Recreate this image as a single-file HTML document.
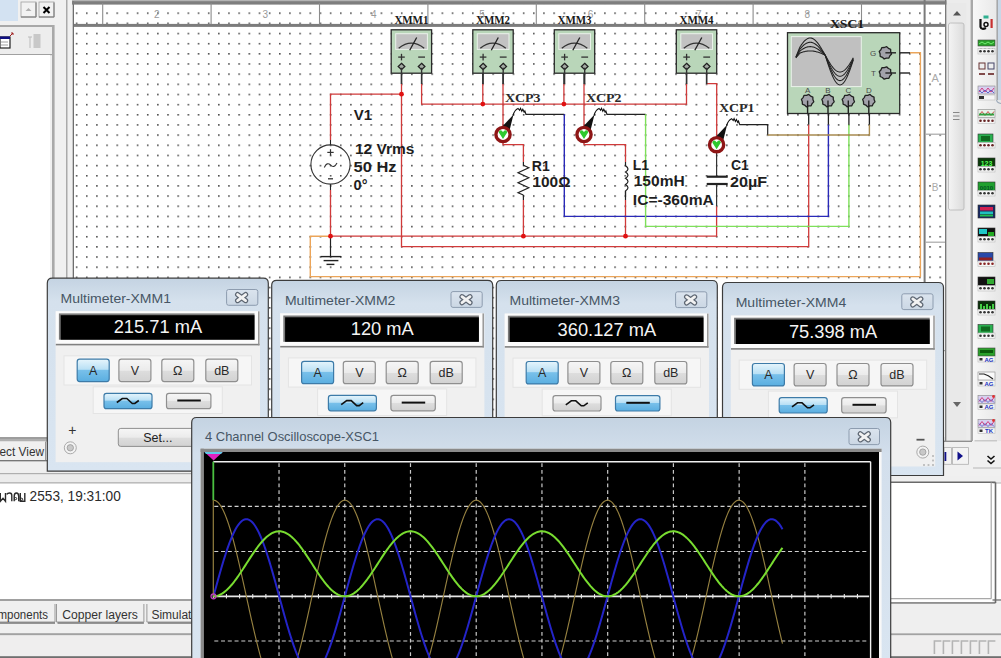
<!DOCTYPE html>
<html><head><meta charset="utf-8"><style>
html,body{margin:0;padding:0;background:#f0f0f0;overflow:hidden;width:1001px;height:658px}
svg{display:block}
</style></head><body><svg width="1001" height="658" viewBox="0 0 1001 658"><defs>
<pattern id="dots" patternUnits="userSpaceOnUse" x="75.8" y="12.4" width="10.16" height="10.16">
<rect x="0.1" y="0.1" width="1.4" height="1.4" fill="#1e1e1e"/></pattern>
<linearGradient id="frame" x1="0" y1="0" x2="0" y2="1"><stop offset="0" stop-color="#c4d3e2"/><stop offset="0.12" stop-color="#d5e1ed"/><stop offset="1" stop-color="#d9e5f1"/></linearGradient>
<linearGradient id="frameS" x1="0" y1="0" x2="0" y2="1"><stop offset="0" stop-color="#c4d3e2"/><stop offset="0.15" stop-color="#d3dfec"/><stop offset="1" stop-color="#d9e5f1"/></linearGradient>
<linearGradient id="btnBlue" x1="0" y1="0" x2="0" y2="1"><stop offset="0" stop-color="#e6f5fc"/><stop offset="0.45" stop-color="#b9e0f5"/><stop offset="0.5" stop-color="#78c0ea"/><stop offset="1" stop-color="#5aaee0"/></linearGradient>
<linearGradient id="btnGray" x1="0" y1="0" x2="0" y2="1"><stop offset="0" stop-color="#f6f6f6"/><stop offset="0.5" stop-color="#ebebeb"/><stop offset="0.52" stop-color="#dddddd"/><stop offset="1" stop-color="#d2d2d2"/></linearGradient>
<linearGradient id="closeG" x1="0" y1="0" x2="0" y2="1"><stop offset="0" stop-color="#dbe4ee"/><stop offset="1" stop-color="#cbd7e4"/></linearGradient>
<linearGradient id="thumb" x1="0" y1="0" x2="1" y2="0"><stop offset="0" stop-color="#f4f4f4"/><stop offset="1" stop-color="#dcdcdc"/></linearGradient>
<linearGradient id="tbar" x1="0" y1="0" x2="1" y2="0"><stop offset="0" stop-color="#f7f7f7"/><stop offset="1" stop-color="#e6e6e6"/></linearGradient>
<clipPath id="canvasClip"><rect x="74" y="3" width="871" height="434"/></clipPath>
</defs>
<rect x="0.00" y="0.00" width="1001.00" height="658.00" fill="#f0f0f0" />
<rect x="0.00" y="0.00" width="18.00" height="21.00" fill="#d3e2f2" />
<rect x="21.00" y="2.00" width="15.00" height="15.00" fill="#f2f2f2" stroke="#a0a0a0" stroke-width="0.8"/>
<line x1="36.00" y1="2.50" x2="36.00" y2="17.00" stroke="#808080" stroke-width="1.2" />
<line x1="21.00" y1="17.00" x2="36.00" y2="17.00" stroke="#808080" stroke-width="1.2" />
<rect x="39.00" y="2.00" width="15.00" height="15.00" fill="#f2f2f2" stroke="#a0a0a0" stroke-width="0.8"/>
<line x1="54.00" y1="2.50" x2="54.00" y2="17.00" stroke="#808080" stroke-width="1.2" />
<line x1="39.00" y1="17.00" x2="54.00" y2="17.00" stroke="#808080" stroke-width="1.2" />
<path d="M25.5,11 L28.5,8 L31.5,11 Z" fill="#b0b0b0"/>
<path d="M43.5,7 L49.5,13 M49.5,7 L43.5,13" stroke="#000" stroke-width="2"/>
<rect x="0.00" y="25.00" width="54.00" height="2.00" fill="#a8a8a8" />
<rect x="0.00" y="27.00" width="52.00" height="27.00" fill="#ededed" />
<rect x="52.00" y="25.00" width="2.60" height="412.00" fill="#a9a9a9" />
<rect x="0.00" y="37.00" width="10.00" height="11.00" fill="#fff" stroke="#202020" stroke-width="1.2"/>
<rect x="0.00" y="36.50" width="10.00" height="2.50" fill="#101080" />
<line x1="1.00" y1="42.00" x2="8.00" y2="42.00" stroke="#888" stroke-width="0.8" />
<line x1="1.00" y1="45.00" x2="8.00" y2="45.00" stroke="#888" stroke-width="0.8" />
<path d="M10,36 L13,33 M11,33 L13,33 L13,35" stroke="#a02020" stroke-width="1" fill="none"/>
<rect x="33.50" y="34.00" width="7.00" height="14.00" fill="#c8c8c8" />
<line x1="30.00" y1="37.00" x2="30.00" y2="48.00" stroke="#bbb" stroke-width="1" />
<line x1="28.00" y1="37.00" x2="32.00" y2="37.00" stroke="#bbb" stroke-width="1" />
<rect x="0.00" y="54.00" width="52.00" height="1.20" fill="#a0a0a0" />
<rect x="0.00" y="55.00" width="50.00" height="382.00" fill="#ffffff" />
<rect x="66.20" y="0.00" width="1.20" height="437.00" fill="#9a9a9a" />
<rect x="72.70" y="0.00" width="1.30" height="437.00" fill="#6e6e6e" />
<rect x="74.00" y="0.00" width="872.00" height="437.00" fill="#ffffff" />
<rect x="74.00" y="3.00" width="851.00" height="434.00" fill="url(#dots)" />
<rect x="925.50" y="3.00" width="19.50" height="434.00" fill="url(#dots)" />
<rect x="72.00" y="0.00" width="895.00" height="1.10" fill="#b4b4b4" />
<rect x="72.00" y="1.10" width="895.00" height="3.50" fill="#7e7e7e" />
<rect x="74.00" y="23.90" width="872.00" height="3.00" fill="#7c7c7c" />
<line x1="102.70" y1="3.00" x2="102.70" y2="24.30" stroke="#8c8c8c" stroke-width="1.1" />
<line x1="211.10" y1="3.00" x2="211.10" y2="24.30" stroke="#8c8c8c" stroke-width="1.1" />
<line x1="319.50" y1="3.00" x2="319.50" y2="24.30" stroke="#8c8c8c" stroke-width="1.1" />
<line x1="427.90" y1="3.00" x2="427.90" y2="24.30" stroke="#8c8c8c" stroke-width="1.1" />
<line x1="536.30" y1="3.00" x2="536.30" y2="24.30" stroke="#8c8c8c" stroke-width="1.1" />
<line x1="644.70" y1="3.00" x2="644.70" y2="24.30" stroke="#8c8c8c" stroke-width="1.1" />
<line x1="753.10" y1="3.00" x2="753.10" y2="24.30" stroke="#8c8c8c" stroke-width="1.1" />
<line x1="861.50" y1="3.00" x2="861.50" y2="24.30" stroke="#8c8c8c" stroke-width="1.1" />
<text x="156.90" y="17.80" font-size="10" fill="#9a9a9a" font-family="Liberation Sans" text-anchor="middle">2</text>
<text x="265.30" y="17.80" font-size="10" fill="#9a9a9a" font-family="Liberation Sans" text-anchor="middle">3</text>
<text x="373.70" y="17.80" font-size="10" fill="#9a9a9a" font-family="Liberation Sans" text-anchor="middle">4</text>
<text x="482.10" y="17.80" font-size="10" fill="#9a9a9a" font-family="Liberation Sans" text-anchor="middle">5</text>
<text x="590.50" y="17.80" font-size="10" fill="#9a9a9a" font-family="Liberation Sans" text-anchor="middle">6</text>
<text x="698.90" y="17.80" font-size="10" fill="#9a9a9a" font-family="Liberation Sans" text-anchor="middle">7</text>
<text x="807.30" y="17.80" font-size="10" fill="#9a9a9a" font-family="Liberation Sans" text-anchor="middle">8</text>
<rect x="923.60" y="0.00" width="2.00" height="437.00" fill="#7a7a7a" />
<rect x="945.00" y="0.00" width="1.60" height="441.00" fill="#7a7a7a" />
<line x1="925.50" y1="134.20" x2="945.00" y2="134.20" stroke="#a8a8a8" stroke-width="1.2" />
<line x1="925.50" y1="242.20" x2="945.00" y2="242.20" stroke="#a8a8a8" stroke-width="1.2" />
<line x1="925.50" y1="350.60" x2="945.00" y2="350.60" stroke="#a8a8a8" stroke-width="1.2" />
<text x="935.20" y="82.00" font-size="11" fill="#aaa" font-family="Liberation Sans" text-anchor="middle">A</text>
<text x="935.20" y="190.50" font-size="10" fill="#aaa" font-family="Liberation Sans" text-anchor="middle">B</text>
<polyline points="330.50,140.00 330.50,94.20 401.50,94.20" fill="none" stroke="#d03a3a" stroke-width="1.3" stroke-linejoin="miter" />
<line x1="330.50" y1="140.00" x2="330.50" y2="145.00" stroke="#222" stroke-width="1.1" />
<polyline points="401.50,84.00 401.50,246.60 808.70,246.60 808.70,124.60" fill="none" stroke="#d03a3a" stroke-width="1.3" stroke-linejoin="miter" />
<line x1="401.50" y1="66.60" x2="401.50" y2="84.00" stroke="#222" stroke-width="1.3" />
<line x1="808.70" y1="100.60" x2="808.70" y2="124.60" stroke="#222" stroke-width="1.3" />
<polyline points="421.60,84.00 421.60,104.10 686.50,104.10 686.50,84.00" fill="none" stroke="#d03a3a" stroke-width="1.3" stroke-linejoin="miter" />
<line x1="421.60" y1="66.60" x2="421.60" y2="84.00" stroke="#222" stroke-width="1.3" />
<line x1="686.50" y1="66.60" x2="686.50" y2="84.00" stroke="#222" stroke-width="1.3" />
<polyline points="482.80,84.00 482.80,104.10" fill="none" stroke="#d03a3a" stroke-width="1.3" stroke-linejoin="miter" />
<line x1="482.80" y1="66.60" x2="482.80" y2="84.00" stroke="#222" stroke-width="1.3" />
<polyline points="563.90,84.00 563.90,104.10" fill="none" stroke="#d03a3a" stroke-width="1.3" stroke-linejoin="miter" />
<line x1="563.90" y1="66.60" x2="563.90" y2="84.00" stroke="#222" stroke-width="1.3" />
<polyline points="503.00,84.00 503.00,144.60 523.40,144.60 523.40,162.00" fill="none" stroke="#d03a3a" stroke-width="1.3" stroke-linejoin="miter" />
<line x1="503.00" y1="66.60" x2="503.00" y2="84.00" stroke="#222" stroke-width="1.3" />
<polyline points="584.00,84.00 584.00,144.70 625.50,144.70 625.50,162.00" fill="none" stroke="#d03a3a" stroke-width="1.3" stroke-linejoin="miter" />
<line x1="584.00" y1="66.60" x2="584.00" y2="84.00" stroke="#222" stroke-width="1.3" />
<line x1="706.50" y1="66.60" x2="706.50" y2="83.60" stroke="#222" stroke-width="1.3" />
<polyline points="706.50,83.60 716.70,83.60 716.70,144.70" fill="none" stroke="#d03a3a" stroke-width="1.3" stroke-linejoin="miter" />
<line x1="716.60" y1="152.00" x2="716.60" y2="176.70" stroke="#333" stroke-width="1.2" />
<line x1="716.60" y1="184.00" x2="716.60" y2="206.50" stroke="#333" stroke-width="1.2" />
<polyline points="716.60,206.50 716.60,236.20 330.50,236.20" fill="none" stroke="#d03a3a" stroke-width="1.3" stroke-linejoin="miter" />
<line x1="523.40" y1="195.00" x2="523.40" y2="200.00" stroke="#222" stroke-width="1.2" />
<polyline points="523.40,200.00 523.40,236.20" fill="none" stroke="#d03a3a" stroke-width="1.3" stroke-linejoin="miter" />
<line x1="625.50" y1="191.00" x2="625.50" y2="200.00" stroke="#222" stroke-width="1.2" />
<polyline points="625.50,200.00 625.50,236.20" fill="none" stroke="#d03a3a" stroke-width="1.3" stroke-linejoin="miter" />
<line x1="330.50" y1="184.00" x2="330.50" y2="190.00" stroke="#222" stroke-width="1.1" />
<polyline points="330.50,190.00 330.50,236.20" fill="none" stroke="#d03a3a" stroke-width="1.3" stroke-linejoin="miter" />
<line x1="330.50" y1="236.20" x2="330.50" y2="256.60" stroke="#222" stroke-width="1.2" />
<line x1="320.60" y1="256.60" x2="341.30" y2="256.60" stroke="#222" stroke-width="1.4" />
<line x1="323.60" y1="260.60" x2="338.40" y2="260.60" stroke="#222" stroke-width="1.4" />
<line x1="326.50" y1="264.40" x2="334.40" y2="264.40" stroke="#222" stroke-width="1.4" />
<polyline points="330.50,236.20 310.30,236.20 310.30,276.60 920.40,276.60 920.40,52.80 910.00,52.80" fill="none" stroke="#eba55a" stroke-width="1.4" stroke-linejoin="miter" />
<line x1="885.40" y1="52.80" x2="910.00" y2="52.80" stroke="#222" stroke-width="1.4" />
<line x1="885.40" y1="73.00" x2="910.00" y2="73.00" stroke="#222" stroke-width="1.4" />
<line x1="525.50" y1="114.30" x2="564.30" y2="114.30" stroke="#222" stroke-width="1.2" />
<polyline points="564.30,114.30 564.30,216.40 828.40,216.40 828.40,124.60" fill="none" stroke="#2a2ab8" stroke-width="1.4" stroke-linejoin="miter" />
<line x1="828.40" y1="100.60" x2="828.40" y2="124.60" stroke="#222" stroke-width="1.3" />
<line x1="606.50" y1="114.30" x2="645.60" y2="114.30" stroke="#222" stroke-width="1.2" />
<polyline points="645.60,114.30 645.60,226.40 848.90,226.40 848.90,124.60" fill="none" stroke="#7ee05a" stroke-width="1.4" stroke-linejoin="miter" />
<line x1="848.90" y1="100.60" x2="848.90" y2="124.60" stroke="#222" stroke-width="1.3" />
<polyline points="739.30,124.60 767.70,124.60 767.70,135.00" fill="none" stroke="#222" stroke-width="1.2" stroke-linejoin="miter" />
<polyline points="767.70,135.00 869.40,135.00 869.40,124.60" fill="none" stroke="#a88a50" stroke-width="1.4" stroke-linejoin="miter" />
<line x1="869.40" y1="100.60" x2="869.40" y2="124.60" stroke="#222" stroke-width="1.3" />
<circle cx="401.5" cy="94.2" r="2.4" fill="#e01010"/>
<circle cx="482.8" cy="104.1" r="2.4" fill="#e01010"/>
<circle cx="563.9" cy="104.1" r="2.4" fill="#e01010"/>
<circle cx="330.5" cy="236.2" r="2.4" fill="#e01010"/>
<circle cx="523.4" cy="236.2" r="2.4" fill="#e01010"/>
<circle cx="625.5" cy="236.2" r="2.4" fill="#e01010"/>
<rect x="391.20" y="29.80" width="40.40" height="43.40" fill="#b9d6b9" stroke="#2a2a2a" stroke-width="1.3"/>
<rect x="395.70" y="33.70" width="31.70" height="15.70" fill="#c2c2c2" stroke="#eaf2ea" stroke-width="1"/>
<path d="M398.7,48.3 Q411.2,37.8 424.2,48.3" fill="none" stroke="#333" stroke-width="1.3"/>
<line x1="409.70" y1="50.30" x2="416.70" y2="37.50" stroke="#222" stroke-width="1.3" />
<line x1="398.20" y1="57.10" x2="404.80" y2="57.10" stroke="#333" stroke-width="1.3" />
<line x1="401.50" y1="53.80" x2="401.50" y2="60.40" stroke="#333" stroke-width="1.3" />
<line x1="418.20" y1="57.10" x2="425.00" y2="57.10" stroke="#333" stroke-width="1.3" />
<path d="M401.5,63.3 L404.8,66.5 L401.5,69.7 L398.2,66.5 Z" fill="#a4aca4" stroke="#222" stroke-width="1.3"/>
<line x1="401.50" y1="67.80" x2="401.50" y2="84.00" stroke="#333" stroke-width="1.4" />
<path d="M421.59999999999997,63.3 L424.9,66.5 L421.59999999999997,69.7 L418.29999999999995,66.5 Z" fill="#a4aca4" stroke="#222" stroke-width="1.3"/>
<line x1="421.60" y1="67.80" x2="421.60" y2="84.00" stroke="#333" stroke-width="1.4" />
<text x="411.40" y="23.80" font-size="11.5" fill="#1a1a1a" font-family="Liberation Serif" text-anchor="middle" font-weight="bold" textLength="34" lengthAdjust="spacingAndGlyphs">XMM1</text>
<rect x="472.80" y="29.80" width="40.40" height="43.40" fill="#b9d6b9" stroke="#2a2a2a" stroke-width="1.3"/>
<rect x="477.30" y="33.70" width="31.70" height="15.70" fill="#c2c2c2" stroke="#eaf2ea" stroke-width="1"/>
<path d="M480.3,48.3 Q492.8,37.8 505.8,48.3" fill="none" stroke="#333" stroke-width="1.3"/>
<line x1="491.30" y1="50.30" x2="498.30" y2="37.50" stroke="#222" stroke-width="1.3" />
<line x1="479.80" y1="57.10" x2="486.40" y2="57.10" stroke="#333" stroke-width="1.3" />
<line x1="483.10" y1="53.80" x2="483.10" y2="60.40" stroke="#333" stroke-width="1.3" />
<line x1="499.80" y1="57.10" x2="506.60" y2="57.10" stroke="#333" stroke-width="1.3" />
<path d="M483.1,63.3 L486.40000000000003,66.5 L483.1,69.7 L479.8,66.5 Z" fill="#a4aca4" stroke="#222" stroke-width="1.3"/>
<line x1="483.10" y1="67.80" x2="483.10" y2="84.00" stroke="#333" stroke-width="1.4" />
<path d="M503.2,63.3 L506.5,66.5 L503.2,69.7 L499.9,66.5 Z" fill="#a4aca4" stroke="#222" stroke-width="1.3"/>
<line x1="503.20" y1="67.80" x2="503.20" y2="84.00" stroke="#333" stroke-width="1.4" />
<text x="493.00" y="23.80" font-size="11.5" fill="#1a1a1a" font-family="Liberation Serif" text-anchor="middle" font-weight="bold" textLength="34" lengthAdjust="spacingAndGlyphs">XMM2</text>
<rect x="554.30" y="29.80" width="40.40" height="43.40" fill="#b9d6b9" stroke="#2a2a2a" stroke-width="1.3"/>
<rect x="558.80" y="33.70" width="31.70" height="15.70" fill="#c2c2c2" stroke="#eaf2ea" stroke-width="1"/>
<path d="M561.8,48.3 Q574.3,37.8 587.3,48.3" fill="none" stroke="#333" stroke-width="1.3"/>
<line x1="572.80" y1="50.30" x2="579.80" y2="37.50" stroke="#222" stroke-width="1.3" />
<line x1="561.30" y1="57.10" x2="567.90" y2="57.10" stroke="#333" stroke-width="1.3" />
<line x1="564.60" y1="53.80" x2="564.60" y2="60.40" stroke="#333" stroke-width="1.3" />
<line x1="581.30" y1="57.10" x2="588.10" y2="57.10" stroke="#333" stroke-width="1.3" />
<path d="M564.5999999999999,63.3 L567.8999999999999,66.5 L564.5999999999999,69.7 L561.3,66.5 Z" fill="#a4aca4" stroke="#222" stroke-width="1.3"/>
<line x1="564.60" y1="67.80" x2="564.60" y2="84.00" stroke="#333" stroke-width="1.4" />
<path d="M584.6999999999999,63.3 L587.9999999999999,66.5 L584.6999999999999,69.7 L581.4,66.5 Z" fill="#a4aca4" stroke="#222" stroke-width="1.3"/>
<line x1="584.70" y1="67.80" x2="584.70" y2="84.00" stroke="#333" stroke-width="1.4" />
<text x="574.50" y="23.80" font-size="11.5" fill="#1a1a1a" font-family="Liberation Serif" text-anchor="middle" font-weight="bold" textLength="34" lengthAdjust="spacingAndGlyphs">XMM3</text>
<rect x="676.30" y="29.80" width="40.40" height="43.40" fill="#b9d6b9" stroke="#2a2a2a" stroke-width="1.3"/>
<rect x="680.80" y="33.70" width="31.70" height="15.70" fill="#c2c2c2" stroke="#eaf2ea" stroke-width="1"/>
<path d="M683.8,48.3 Q696.3,37.8 709.3,48.3" fill="none" stroke="#333" stroke-width="1.3"/>
<line x1="694.80" y1="50.30" x2="701.80" y2="37.50" stroke="#222" stroke-width="1.3" />
<line x1="683.30" y1="57.10" x2="689.90" y2="57.10" stroke="#333" stroke-width="1.3" />
<line x1="686.60" y1="53.80" x2="686.60" y2="60.40" stroke="#333" stroke-width="1.3" />
<line x1="703.30" y1="57.10" x2="710.10" y2="57.10" stroke="#333" stroke-width="1.3" />
<path d="M686.5999999999999,63.3 L689.8999999999999,66.5 L686.5999999999999,69.7 L683.3,66.5 Z" fill="#a4aca4" stroke="#222" stroke-width="1.3"/>
<line x1="686.60" y1="67.80" x2="686.60" y2="84.00" stroke="#333" stroke-width="1.4" />
<path d="M706.6999999999999,63.3 L709.9999999999999,66.5 L706.6999999999999,69.7 L703.4,66.5 Z" fill="#a4aca4" stroke="#222" stroke-width="1.3"/>
<line x1="706.70" y1="67.80" x2="706.70" y2="84.00" stroke="#333" stroke-width="1.4" />
<text x="696.50" y="23.80" font-size="11.5" fill="#1a1a1a" font-family="Liberation Serif" text-anchor="middle" font-weight="bold" textLength="34" lengthAdjust="spacingAndGlyphs">XMM4</text>
<circle cx="330.5" cy="164.5" r="19.6" fill="none" stroke="#333" stroke-width="1.1"/>
<line x1="327.30" y1="152.40" x2="333.70" y2="152.40" stroke="#333" stroke-width="1.2" />
<line x1="330.50" y1="149.20" x2="330.50" y2="155.60" stroke="#333" stroke-width="1.2" />
<line x1="328.00" y1="178.80" x2="333.00" y2="178.80" stroke="#333" stroke-width="1.3" />
<path d="M324.3,167.5 Q327,161.5 330.5,165 Q334,168.8 337,163" fill="none" stroke="#333" stroke-width="1.1"/>
<text x="353.80" y="119.90" font-size="15" fill="#1e1e1e" font-family="Liberation Sans" font-weight="bold">V1</text>
<text x="355.00" y="154.00" font-size="14.5" fill="#1e1e1e" font-family="Liberation Sans" font-weight="bold" textLength="59.5" lengthAdjust="spacingAndGlyphs">12 Vrms</text>
<text x="353.60" y="171.70" font-size="14.5" fill="#1e1e1e" font-family="Liberation Sans" font-weight="bold" textLength="43" lengthAdjust="spacingAndGlyphs">50 Hz</text>
<text x="353.60" y="189.50" font-size="14.5" fill="#1e1e1e" font-family="Liberation Sans" font-weight="bold">0°</text>
<polyline points="523.40,162.00 523.40,165.20 528.80,167.70 518.00,172.70 528.80,177.70 518.00,182.70 528.80,187.70 518.00,192.70 523.40,195.00" fill="none" stroke="#222" stroke-width="1.2" stroke-linejoin="miter" />
<text x="531.80" y="170.50" font-size="14" fill="#1e1e1e" font-family="Liberation Sans" font-weight="bold">R1</text>
<text x="532.50" y="186.50" font-size="14" fill="#1e1e1e" font-family="Liberation Sans" font-weight="bold" textLength="38" lengthAdjust="spacingAndGlyphs">100Ω</text>
<path d="M625.5,162 L625.5,165.7 Q630.5,168.89999999999998 625.5,172.0 Q630.5,175.2 625.5,178.3 Q630.5,181.5 625.5,184.60000000000002 Q630.5,187.8 625.5,190.90000000000003 L625.5,195" fill="none" stroke="#222" stroke-width="1.2"/>
<text x="632.80" y="170.00" font-size="14" fill="#1e1e1e" font-family="Liberation Sans" font-weight="bold">L1</text>
<text x="633.70" y="185.50" font-size="14" fill="#1e1e1e" font-family="Liberation Sans" font-weight="bold" textLength="51" lengthAdjust="spacingAndGlyphs">150mH</text>
<text x="632.80" y="204.70" font-size="14" fill="#1e1e1e" font-family="Liberation Sans" font-weight="bold" textLength="81" lengthAdjust="spacingAndGlyphs">IC=-360mA</text>
<line x1="706.70" y1="176.70" x2="727.70" y2="176.70" stroke="#222" stroke-width="2.2" />
<line x1="706.70" y1="184.00" x2="727.70" y2="184.00" stroke="#222" stroke-width="2.2" />
<text x="731.00" y="170.00" font-size="14" fill="#1e1e1e" font-family="Liberation Sans" font-weight="bold">C1</text>
<text x="730.00" y="186.70" font-size="14" fill="#1e1e1e" font-family="Liberation Sans" font-weight="bold" textLength="37" lengthAdjust="spacingAndGlyphs">20µF</text>
<path d="M499.5,129.5 L513.5,114.5 L509,132.5 Z" fill="#111"/>
<path d="M513,115.5 Q514.5,110.0 518,108.5 l1.6,1.8 l0.9,-2 l1.3,3 l1,-2 l1.3,2.8 l0.8,-1.2 L526,114.3" fill="none" stroke="#111" stroke-width="1.1"/>
<circle cx="503" cy="134.5" r="7.1" fill="#fff" stroke="#8e1616" stroke-width="3.4"/>
<path d="M498.7,132.3 Q499.5,129.5 501.5,130.5 L503,132.0 L504.5,130.5 Q506.5,129.5 507.3,132.3 L503,139.0 Z" fill="#2ec82e"/>
<text x="505.00" y="101.70" font-size="12" fill="#2a2a2a" font-family="Liberation Serif" font-weight="bold" textLength="35.5" lengthAdjust="spacingAndGlyphs">XCP3</text>
<path d="M580.5,129.5 L594.5,114.5 L590,132.5 Z" fill="#111"/>
<path d="M594,115.5 Q595.5,110.0 599,108.5 l1.6,1.8 l0.9,-2 l1.3,3 l1,-2 l1.3,2.8 l0.8,-1.2 L607,114.3" fill="none" stroke="#111" stroke-width="1.1"/>
<circle cx="584" cy="134.5" r="7.1" fill="#fff" stroke="#8e1616" stroke-width="3.4"/>
<path d="M579.7,132.3 Q580.5,129.5 582.5,130.5 L584,132.0 L585.5,130.5 Q587.5,129.5 588.3,132.3 L584,139.0 Z" fill="#2ec82e"/>
<text x="586.00" y="101.70" font-size="12" fill="#2a2a2a" font-family="Liberation Serif" font-weight="bold" textLength="35.5" lengthAdjust="spacingAndGlyphs">XCP2</text>
<path d="M713.1,139.7 L727.1,124.69999999999999 L722.6,142.7 Z" fill="#111"/>
<path d="M726.6,125.69999999999999 Q728.1,120.19999999999999 731.6,118.69999999999999 l1.6,1.8 l0.9,-2 l1.3,3 l1,-2 l1.3,2.8 l0.8,-1.2 L739.6,124.49999999999999" fill="none" stroke="#111" stroke-width="1.1"/>
<circle cx="716.6" cy="144.7" r="7.1" fill="#fff" stroke="#8e1616" stroke-width="3.4"/>
<path d="M712.3000000000001,142.5 Q713.1,139.7 715.1,140.7 L716.6,142.2 L718.1,140.7 Q720.1,139.7 720.9,142.5 L716.6,149.2 Z" fill="#2ec82e"/>
<text x="719.00" y="112.00" font-size="12" fill="#2a2a2a" font-family="Liberation Serif" font-weight="bold" textLength="35.5" lengthAdjust="spacingAndGlyphs">XCP1</text>
<rect x="787.50" y="32.70" width="112.20" height="80.80" fill="#b9d6b9" stroke="#2a2a2a" stroke-width="1.3"/>
<rect x="791.30" y="36.60" width="70.00" height="50.00" fill="#c0c0c0" stroke="#eaf2ea" stroke-width="1"/>
<polyline points="795.90,57.00 796.60,55.23 797.30,53.47 798.00,51.73 798.70,50.01 799.40,48.33 800.10,46.76 800.80,45.69 801.50,44.66 802.20,43.70 802.90,42.79 803.60,41.95 804.30,41.18 805.00,40.49 805.70,39.88 806.40,39.35 807.10,38.90 807.80,38.54 808.50,38.27 809.20,38.09 809.90,38.01 810.60,38.02 811.30,38.11 812.00,38.31 812.70,38.59 813.40,38.96 814.10,39.42 814.80,39.96 815.50,40.59 816.20,41.29 816.90,42.07 817.60,42.92 818.30,43.83 819.00,44.81 819.70,45.84 820.40,46.92 821.10,48.04 821.80,49.20 822.50,50.40 823.20,51.62 823.90,52.86 824.60,54.10 825.30,55.36 826.00,56.61 826.70,57.85 827.40,59.08 828.10,60.29 828.80,61.46 829.50,62.61 830.20,63.71 830.90,64.76 831.60,65.76 832.30,66.70 833.00,67.58 833.70,68.39 834.40,69.12 835.10,69.78 835.80,70.36 836.50,70.86 837.20,71.26 837.90,71.59 838.60,71.82 839.30,71.95 840.00,72.00 840.70,71.95 841.40,71.82 842.10,71.59 842.80,71.26 843.50,70.86 844.20,70.36 844.90,69.78 845.60,69.12 846.30,68.39 847.00,67.58 847.70,66.70 848.40,65.76 849.10,64.76 849.80,63.71 850.50,62.61 851.20,61.46 851.90,60.29 852.60,59.08 853.30,57.85" fill="none" stroke="#222" stroke-width="1.05" stroke-linejoin="miter" />
<polyline points="795.90,57.27 796.60,55.81 797.30,54.37 798.00,52.93 798.70,51.52 799.40,50.13 800.10,48.84 800.80,48.04 801.50,47.28 802.20,46.56 802.90,45.88 803.60,45.25 804.30,44.68 805.00,44.16 805.70,43.70 806.40,43.31 807.10,42.97 807.80,42.70 808.50,42.50 809.20,42.37 809.90,42.31 810.60,42.31 811.30,42.39 812.00,42.53 812.70,42.74 813.40,43.02 814.10,43.36 814.80,43.76 815.50,44.23 816.20,44.76 816.90,45.34 817.60,45.97 818.30,46.66 819.00,47.38 819.70,48.15 820.40,48.96 821.10,49.80 821.80,50.67 822.50,51.56 823.20,52.47 823.90,53.40 824.60,54.33 825.30,55.45 826.00,57.02 826.70,58.58 827.40,60.11 828.10,61.62 828.80,63.10 829.50,64.53 830.20,65.91 830.90,67.23 831.60,68.48 832.30,69.66 833.00,70.76 833.70,71.77 834.40,72.69 835.10,73.52 835.80,74.25 836.50,74.87 837.20,75.38 837.90,75.78 838.60,76.07 839.30,76.24 840.00,76.30 840.70,76.24 841.40,76.07 842.10,75.78 842.80,75.38 843.50,74.87 844.20,74.25 844.90,73.52 845.60,72.69 846.30,71.77 847.00,70.76 847.70,69.66 848.40,68.48 849.10,67.23 849.80,65.91 850.50,64.53 851.20,63.10 851.90,61.62 852.60,60.11 853.30,58.58" fill="none" stroke="#222" stroke-width="1.05" stroke-linejoin="miter" />
<polyline points="795.90,57.54 796.60,56.40 797.30,55.27 798.00,54.14 798.70,53.03 799.40,51.93 800.10,50.93 800.80,50.40 801.50,49.89 802.20,49.41 802.90,48.97 803.60,48.55 804.30,48.17 805.00,47.83 805.70,47.53 806.40,47.27 807.10,47.04 807.80,46.87 808.50,46.73 809.20,46.65 809.90,46.60 810.60,46.61 811.30,46.66 812.00,46.75 812.70,46.89 813.40,47.07 814.10,47.30 814.80,47.57 815.50,47.88 816.20,48.23 816.90,48.61 817.60,49.03 818.30,49.48 819.00,49.96 819.70,50.47 820.40,51.01 821.10,51.56 821.80,52.14 822.50,52.73 823.20,53.33 823.90,53.94 824.60,54.56 825.30,55.54 826.00,57.43 826.70,59.30 827.40,61.15 828.10,62.96 828.80,64.73 829.50,66.45 830.20,68.11 830.90,69.70 831.60,71.20 832.30,72.62 833.00,73.94 833.70,75.16 834.40,76.27 835.10,77.26 835.80,78.13 836.50,78.88 837.20,79.49 837.90,79.98 838.60,80.32 839.30,80.53 840.00,80.60 840.70,80.53 841.40,80.32 842.10,79.98 842.80,79.49 843.50,78.88 844.20,78.13 844.90,77.26 845.60,76.27 846.30,75.16 847.00,73.94 847.70,72.62 848.40,71.20 849.10,69.70 849.80,68.11 850.50,66.45 851.20,64.73 851.90,62.96 852.60,61.15 853.30,59.30" fill="none" stroke="#222" stroke-width="1.05" stroke-linejoin="miter" />
<polyline points="795.90,57.82 796.60,56.99 797.30,56.17 798.00,55.35 798.70,54.54 799.40,53.73 800.10,53.01 800.80,52.75 801.50,52.51 802.20,52.27 802.90,52.06 803.60,51.85 804.30,51.67 805.00,51.50 805.70,51.35 806.40,51.22 807.10,51.12 807.80,51.03 808.50,50.97 809.20,50.92 809.90,50.90 810.60,50.90 811.30,50.93 812.00,50.97 812.70,51.04 813.40,51.13 814.10,51.24 814.80,51.37 815.50,51.52 816.20,51.69 816.90,51.88 817.60,52.09 818.30,52.31 819.00,52.54 819.70,52.79 820.40,53.05 821.10,53.32 821.80,53.60 822.50,53.89 823.20,54.18 823.90,54.48 824.60,54.78 825.30,55.63 826.00,57.83 826.70,60.02 827.40,62.18 828.10,64.30 828.80,66.37 829.50,68.38 830.20,70.31 830.90,72.16 831.60,73.92 832.30,75.58 833.00,77.12 833.70,78.54 834.40,79.84 835.10,81.00 835.80,82.02 836.50,82.89 837.20,83.61 837.90,84.17 838.60,84.57 839.30,84.82 840.00,84.90 840.70,84.82 841.40,84.57 842.10,84.17 842.80,83.61 843.50,82.89 844.20,82.02 844.90,81.00 845.60,79.84 846.30,78.54 847.00,77.12 847.70,75.58 848.40,73.92 849.10,72.16 849.80,70.31 850.50,68.38 851.20,66.37 851.90,64.30 852.60,62.18 853.30,60.02" fill="none" stroke="#222" stroke-width="1.05" stroke-linejoin="miter" />
<polygon points="813.78,101.83 812.09,103.60 811.10,105.84 808.65,105.90 806.37,106.78 804.60,105.09 802.36,104.10 802.30,101.65 801.42,99.37 803.11,97.60 804.10,95.36 806.55,95.30 808.83,94.42 810.60,96.11 812.84,97.10 812.90,99.55" fill="#a2a2aa" stroke="#222" stroke-width="1.3" stroke-linejoin="round"/>
<text x="807.60" y="92.50" font-size="8" fill="#4a4a4a" font-family="Liberation Sans" text-anchor="middle">A</text>
<polygon points="834.18,101.83 832.49,103.60 831.50,105.84 829.05,105.90 826.77,106.78 825.00,105.09 822.76,104.10 822.70,101.65 821.82,99.37 823.51,97.60 824.50,95.36 826.95,95.30 829.23,94.42 831.00,96.11 833.24,97.10 833.30,99.55" fill="#a2a2aa" stroke="#222" stroke-width="1.3" stroke-linejoin="round"/>
<text x="828.00" y="92.50" font-size="8" fill="#4a4a4a" font-family="Liberation Sans" text-anchor="middle">B</text>
<polygon points="854.48,101.83 852.79,103.60 851.80,105.84 849.35,105.90 847.07,106.78 845.30,105.09 843.06,104.10 843.00,101.65 842.12,99.37 843.81,97.60 844.80,95.36 847.25,95.30 849.53,94.42 851.30,96.11 853.54,97.10 853.60,99.55" fill="#a2a2aa" stroke="#222" stroke-width="1.3" stroke-linejoin="round"/>
<text x="848.30" y="92.50" font-size="8" fill="#4a4a4a" font-family="Liberation Sans" text-anchor="middle">C</text>
<polygon points="874.98,101.83 873.29,103.60 872.30,105.84 869.85,105.90 867.57,106.78 865.80,105.09 863.56,104.10 863.50,101.65 862.62,99.37 864.31,97.60 865.30,95.36 867.75,95.30 870.03,94.42 871.80,96.11 874.04,97.10 874.10,99.55" fill="#a2a2aa" stroke="#222" stroke-width="1.3" stroke-linejoin="round"/>
<text x="868.80" y="92.50" font-size="8" fill="#4a4a4a" font-family="Liberation Sans" text-anchor="middle">D</text>
<polygon points="891.58,54.03 889.89,55.80 888.90,58.04 886.45,58.10 884.17,58.98 882.40,57.29 880.16,56.30 880.10,53.85 879.22,51.57 880.91,49.80 881.90,47.56 884.35,47.50 886.63,46.62 888.40,48.31 890.64,49.30 890.70,51.75" fill="#a2a2aa" stroke="#222" stroke-width="1.3" stroke-linejoin="round"/>
<polygon points="891.58,74.23 889.89,76.00 888.90,78.24 886.45,78.30 884.17,79.18 882.40,77.49 880.16,76.50 880.10,74.05 879.22,71.77 880.91,70.00 881.90,67.76 884.35,67.70 886.63,66.82 888.40,68.51 890.64,69.50 890.70,71.95" fill="#a2a2aa" stroke="#222" stroke-width="1.3" stroke-linejoin="round"/>
<text x="873.00" y="56.00" font-size="8" fill="#4a4a4a" font-family="Liberation Sans" text-anchor="middle">G</text>
<text x="873.50" y="76.00" font-size="8" fill="#4a4a4a" font-family="Liberation Sans" text-anchor="middle">T</text>
<line x1="807.60" y1="100.60" x2="807.60" y2="114.00" stroke="#222" stroke-width="1.4" />
<line x1="828.00" y1="100.60" x2="828.00" y2="114.00" stroke="#222" stroke-width="1.4" />
<line x1="848.30" y1="100.60" x2="848.30" y2="114.00" stroke="#222" stroke-width="1.4" />
<line x1="868.80" y1="100.60" x2="868.80" y2="114.00" stroke="#222" stroke-width="1.4" />
<line x1="885.40" y1="52.80" x2="896.00" y2="52.80" stroke="#222" stroke-width="1.4" />
<line x1="885.40" y1="73.00" x2="896.00" y2="73.00" stroke="#222" stroke-width="1.4" />
<text x="847.00" y="28.00" font-size="12.5" fill="#1a1a1a" font-family="Liberation Serif" text-anchor="middle" font-weight="bold" textLength="34" lengthAdjust="spacingAndGlyphs">XSC1</text>
<rect x="946.60" y="0.00" width="24.00" height="441.00" fill="#ececec" />
<rect x="947.00" y="3.00" width="19.50" height="438.00" fill="#e9e9e9" />
<path d="M953,15.5 L957,11 L961,15.5 Z" fill="#555"/>
<rect x="948.50" y="23.00" width="15.50" height="187.00" fill="url(#thumb)" stroke="#b5b5b5" stroke-width="0.8" rx="2"/>
<line x1="953.00" y1="112.50" x2="959.50" y2="112.50" stroke="#888" stroke-width="1" />
<line x1="953.00" y1="116.00" x2="959.50" y2="116.00" stroke="#888" stroke-width="1" />
<line x1="953.00" y1="119.50" x2="959.50" y2="119.50" stroke="#888" stroke-width="1" />
<path d="M953,402 L957,407 L961,402 Z" fill="#666"/>
<rect x="970.60" y="0.00" width="2.40" height="441.00" fill="#a8a8a8" />
<rect x="973.00" y="0.00" width="28.00" height="441.00" fill="url(#tbar)" />
<rect x="996.60" y="0.00" width="1.20" height="100.00" fill="#8b8b8b" />
<rect x="997.80" y="0.00" width="3.20" height="100.00" fill="#c9d7e6" />
<path d="M996.6,100 Q997,103 1001,103.5" fill="none" stroke="#9aa8b8" stroke-width="1.2"/>
<path d="M980.5,19 L980.5,27 Q981.5,30 986,28" fill="none" stroke="#111" stroke-width="2.2"/>
<circle cx="986" cy="24.5" r="2" fill="#fff" stroke="#111" stroke-width="1.5"/>
<rect x="990.50" y="19.00" width="2.20" height="9.00" fill="#c83030" />
<rect x="983.50" y="15.50" width="5.00" height="3.00" fill="#30b090" />
<rect x="978.00" y="40.00" width="17.00" height="6.00" fill="#2aa02a" stroke="#444" stroke-width="0.6"/>
<path d="M979,44 l3,-2 l3,2 l3,-2 l3,2 l3,-2" fill="none" stroke="#8f8" stroke-width="0.8"/>
<line x1="980.00" y1="48.50" x2="993.00" y2="48.50" stroke="#555" stroke-width="0.8" stroke-dasharray="2 2"/>
<rect x="978.00" y="48.50" width="17.00" height="5.50" fill="#f6f6f6" stroke="#bbb" stroke-width="0.6"/>
<circle cx="980.5" cy="51.2" r="1.3" fill="#333"/>
<circle cx="984.5" cy="51.2" r="1.3" fill="#333"/>
<circle cx="988.5" cy="51.2" r="1.3" fill="#333"/>
<circle cx="992.5" cy="51.2" r="1.3" fill="#333"/>
<rect x="979.00" y="63.00" width="6.00" height="6.00" fill="#eee" stroke="#633" stroke-width="1"/>
<rect x="988.00" y="63.00" width="6.00" height="6.00" fill="#eee" stroke="#446" stroke-width="1"/>
<line x1="979.00" y1="74.00" x2="985.00" y2="74.00" stroke="#622" stroke-width="1.6" />
<line x1="988.00" y1="74.00" x2="994.00" y2="74.00" stroke="#622" stroke-width="1.6" />
<rect x="978.00" y="86.00" width="17.00" height="8.00" fill="#d8d0f0" stroke="#888" stroke-width="0.6"/>
<path d="M979,92 l3,-4 l3,4 l3,-4 l3,4 l3,-4" fill="none" stroke="#d04080" stroke-width="1"/>
<path d="M979,90 l3,3 l3,-3 l3,3 l3,-3 l3,3" fill="none" stroke="#4050c0" stroke-width="0.8"/>
<rect x="978.00" y="95.00" width="17.00" height="5.00" fill="#f6f6f6" stroke="#bbb" stroke-width="0.6"/>
<rect x="979.00" y="96.00" width="5.00" height="3.00" fill="#333" />
<rect x="978.00" y="109.50" width="17.00" height="8.00" fill="#eaf2ea" stroke="#888" stroke-width="0.6"/>
<path d="M979,115.5 l3,-4 l3,4 l3,-4 l3,4 l3,-4" fill="none" stroke="#d05050" stroke-width="1"/>
<rect x="979.00" y="113.50" width="15.00" height="2.00" fill="#30a040" />
<rect x="978.00" y="118.00" width="17.00" height="5.50" fill="#f6f6f6" stroke="#bbb" stroke-width="0.6"/>
<circle cx="980.5" cy="120.7" r="1.3" fill="#622"/>
<circle cx="984.5" cy="120.7" r="1.3" fill="#622"/>
<circle cx="988.5" cy="120.7" r="1.3" fill="#622"/>
<circle cx="992.5" cy="120.7" r="1.3" fill="#622"/>
<rect x="978.00" y="134.00" width="15.00" height="9.00" fill="#2ab050" stroke="#333" stroke-width="0.6"/>
<rect x="981.00" y="136.00" width="9.00" height="5.00" fill="#106a20" />
<rect x="978.00" y="142.50" width="17.00" height="5.50" fill="#f6f6f6" stroke="#bbb" stroke-width="0.6"/>
<circle cx="980.5" cy="145.2" r="1.3" fill="#622"/>
<circle cx="984.5" cy="145.2" r="1.3" fill="#622"/>
<circle cx="988.5" cy="145.2" r="1.3" fill="#622"/>
<circle cx="992.5" cy="145.2" r="1.3" fill="#622"/>
<rect x="978.00" y="158.00" width="17.00" height="9.00" fill="#0a3a0a" stroke="#333" stroke-width="0.6"/>
<text x="986.50" y="165.50" font-size="7" fill="#5f5" font-family="Liberation Sans" text-anchor="middle" font-weight="bold">123</text>
<rect x="978.00" y="166.50" width="17.00" height="5.50" fill="#f6f6f6" stroke="#bbb" stroke-width="0.6"/>
<circle cx="980.5" cy="169.2" r="1.3" fill="#333"/>
<circle cx="984.5" cy="169.2" r="1.3" fill="#333"/>
<circle cx="988.5" cy="169.2" r="1.3" fill="#333"/>
<circle cx="992.5" cy="169.2" r="1.3" fill="#333"/>
<rect x="978.00" y="182.00" width="17.00" height="9.00" fill="#20a030" stroke="#333" stroke-width="0.6"/>
<text x="986.50" y="189.50" font-size="6" fill="#052" font-family="Liberation Sans" text-anchor="middle" font-weight="bold">0010</text>
<rect x="978.00" y="190.50" width="17.00" height="5.50" fill="#f6f6f6" stroke="#bbb" stroke-width="0.6"/>
<circle cx="980.5" cy="193.2" r="1.3" fill="#333"/>
<circle cx="984.5" cy="193.2" r="1.3" fill="#333"/>
<circle cx="988.5" cy="193.2" r="1.3" fill="#333"/>
<circle cx="992.5" cy="193.2" r="1.3" fill="#333"/>
<rect x="978.00" y="205.00" width="17.00" height="13.00" fill="#182860" stroke="#333" stroke-width="0.6"/>
<rect x="980.00" y="207.00" width="13.00" height="3.50" fill="#d02050" />
<rect x="980.00" y="211.50" width="13.00" height="2.50" fill="#20c0c0" />
<rect x="980.00" y="214.50" width="13.00" height="2.00" fill="#20c050" />
<rect x="978.00" y="228.00" width="17.00" height="9.00" fill="#101010" stroke="#333" stroke-width="0.6"/>
<rect x="979.00" y="229.00" width="8.00" height="5.00" fill="#20c8c8" />
<rect x="988.00" y="232.00" width="6.00" height="4.00" fill="#2a2" />
<rect x="978.00" y="236.50" width="17.00" height="5.50" fill="#f6f6f6" stroke="#bbb" stroke-width="0.6"/>
<circle cx="980.5" cy="239.2" r="1.3" fill="#333"/>
<circle cx="984.5" cy="239.2" r="1.3" fill="#333"/>
<circle cx="988.5" cy="239.2" r="1.3" fill="#333"/>
<circle cx="992.5" cy="239.2" r="1.3" fill="#333"/>
<rect x="978.00" y="252.50" width="15.00" height="9.00" fill="#2848a8" stroke="#333" stroke-width="0.6"/>
<rect x="979.00" y="257.50" width="13.00" height="3.00" fill="#902020" />
<rect x="978.00" y="261.00" width="17.00" height="5.50" fill="#f6f6f6" stroke="#bbb" stroke-width="0.6"/>
<circle cx="980.5" cy="263.7" r="1.3" fill="#822"/>
<circle cx="984.5" cy="263.7" r="1.3" fill="#822"/>
<circle cx="988.5" cy="263.7" r="1.3" fill="#822"/>
<circle cx="992.5" cy="263.7" r="1.3" fill="#822"/>
<rect x="978.00" y="277.00" width="17.00" height="9.00" fill="#111" stroke="#333" stroke-width="0.6"/>
<rect x="987.00" y="279.00" width="7.00" height="5.00" fill="#3a3" />
<rect x="978.00" y="285.50" width="17.00" height="5.50" fill="#f6f6f6" stroke="#bbb" stroke-width="0.6"/>
<circle cx="980.5" cy="288.2" r="1.3" fill="#333"/>
<circle cx="984.5" cy="288.2" r="1.3" fill="#333"/>
<circle cx="988.5" cy="288.2" r="1.3" fill="#333"/>
<circle cx="992.5" cy="288.2" r="1.3" fill="#333"/>
<rect x="978.00" y="301.00" width="17.00" height="9.00" fill="#0a300a" stroke="#333" stroke-width="0.6"/>
<rect x="980.00" y="304.00" width="2.00" height="5.00" fill="#4c4" />
<rect x="983.00" y="306.00" width="2.00" height="3.00" fill="#4c4" />
<rect x="986.00" y="304.00" width="2.00" height="5.00" fill="#4c4" />
<rect x="989.00" y="306.00" width="2.00" height="3.00" fill="#4c4" />
<rect x="992.00" y="304.00" width="2.00" height="5.00" fill="#4c4" />
<rect x="978.00" y="309.50" width="17.00" height="5.50" fill="#f6f6f6" stroke="#bbb" stroke-width="0.6"/>
<circle cx="980.5" cy="312.2" r="1.3" fill="#333"/>
<circle cx="984.5" cy="312.2" r="1.3" fill="#333"/>
<circle cx="988.5" cy="312.2" r="1.3" fill="#333"/>
<circle cx="992.5" cy="312.2" r="1.3" fill="#333"/>
<rect x="978.00" y="324.50" width="15.00" height="9.00" fill="#2ab050" stroke="#333" stroke-width="0.6"/>
<rect x="981.00" y="326.50" width="9.00" height="5.00" fill="#106a20" />
<rect x="978.00" y="333.00" width="17.00" height="5.50" fill="#f6f6f6" stroke="#bbb" stroke-width="0.6"/>
<circle cx="980.5" cy="335.7" r="1.3" fill="#333"/>
<circle cx="984.5" cy="335.7" r="1.3" fill="#333"/>
<circle cx="988.5" cy="335.7" r="1.3" fill="#333"/>
<circle cx="992.5" cy="335.7" r="1.3" fill="#333"/>
<rect x="978.00" y="348.00" width="17.00" height="8.00" fill="#2aa02a" stroke="#444" stroke-width="0.6"/>
<rect x="980.00" y="350.00" width="13.00" height="3.00" fill="#0b5a0b" />
<rect x="978.00" y="356.50" width="17.00" height="5.50" fill="#f6f6f6" stroke="#bbb" stroke-width="0.6"/>
<text x="989.00" y="361.60" font-size="6" fill="#2030c0" font-family="Liberation Sans" text-anchor="middle" font-weight="bold">AG</text>
<rect x="979.50" y="358.00" width="3.00" height="2.50" fill="#333" />
<rect x="978.00" y="372.00" width="17.00" height="8.00" fill="#fafafa" stroke="#888" stroke-width="0.6"/>
<path d="M979,374 L984,374 Q988,375 993,379" fill="none" stroke="#222" stroke-width="1.2"/>
<rect x="978.00" y="380.50" width="17.00" height="5.50" fill="#f6f6f6" stroke="#bbb" stroke-width="0.6"/>
<text x="989.00" y="385.60" font-size="6" fill="#2030c0" font-family="Liberation Sans" text-anchor="middle" font-weight="bold">AG</text>
<rect x="979.50" y="382.00" width="3.00" height="2.50" fill="#333" />
<rect x="978.00" y="395.50" width="17.00" height="8.00" fill="#d8d0f0" stroke="#888" stroke-width="0.6"/>
<path d="M979,401.5 l3,-4 l3,4 l3,-4 l3,4 l3,-4" fill="none" stroke="#d04080" stroke-width="1"/>
<path d="M979,399.5 l3,3 l3,-3 l3,3 l3,-3 l3,3" fill="none" stroke="#4050c0" stroke-width="0.8"/>
<circle cx="993.5" cy="396.5" r="1.4" fill="#e03030"/>
<rect x="978.00" y="404.00" width="17.00" height="5.50" fill="#f6f6f6" stroke="#bbb" stroke-width="0.6"/>
<text x="989.00" y="409.10" font-size="6" fill="#2030c0" font-family="Liberation Sans" text-anchor="middle" font-weight="bold">AG</text>
<rect x="979.50" y="405.50" width="3.00" height="2.50" fill="#333" />
<rect x="978.00" y="419.50" width="17.00" height="8.00" fill="#d8d0f0" stroke="#888" stroke-width="0.6"/>
<path d="M979,425.5 l3,-4 l3,4 l3,-4 l3,4 l3,-4" fill="none" stroke="#d04080" stroke-width="1"/>
<path d="M979,423.5 l3,3 l3,-3 l3,3 l3,-3 l3,3" fill="none" stroke="#4050c0" stroke-width="0.8"/>
<circle cx="993.5" cy="420.5" r="1.4" fill="#e03030"/>
<rect x="978.00" y="428.00" width="17.00" height="5.50" fill="#f6f6f6" stroke="#bbb" stroke-width="0.6"/>
<text x="989.00" y="433.10" font-size="6" fill="#2030c0" font-family="Liberation Sans" text-anchor="middle" font-weight="bold">TK</text>
<rect x="979.50" y="429.50" width="3.00" height="2.50" fill="#333" />
<rect x="0.00" y="437.00" width="72.00" height="4.50" fill="#b0b0b0" />
<line x1="0.00" y1="438.00" x2="72.00" y2="438.00" stroke="#8a8a8a" stroke-width="1.2" />
<rect x="0.00" y="441.50" width="46.00" height="19.00" fill="#f0f0f0" />
<line x1="45.50" y1="441.50" x2="45.50" y2="460.50" stroke="#999" stroke-width="1" />
<text x="-0.50" y="455.80" font-size="12.5" fill="#333" font-family="Liberation Sans" textLength="44.5" lengthAdjust="spacingAndGlyphs">ect View</text>
<rect x="0.00" y="460.00" width="1001.00" height="1.60" fill="#777" />
<rect x="0.00" y="461.60" width="1001.00" height="12.00" fill="#efefef" />
<rect x="0.00" y="473.20" width="1001.00" height="1.20" fill="#a0a0a0" />
<rect x="0.00" y="474.40" width="1001.00" height="8.20" fill="#ececec" />
<rect x="0.00" y="482.40" width="1001.00" height="1.20" fill="#9c9c9c" />
<rect x="0.00" y="483.60" width="1001.00" height="115.40" fill="#ffffff" />
<path d="M0.3,493 L0.3,501.3 L3,498.3 L5.5,501.3 L5.5,493 M6.8,494.3 Q7.5,493 9.6,493 Q11.8,493 11.8,495.5 L11.8,501.3 M14.2,501.3 L14.2,496.5 Q14.2,493 16.4,493 Q18.7,493 18.7,496.5 L18.7,501.3 M20.3,493 L20.3,501.3 L24.8,501.3 L24.8,493" fill="none" stroke="#2a2a2a" stroke-width="1.4"/>
<circle cx="15.6" cy="498.6" r="1.1" fill="none" stroke="#2a2a2a" stroke-width="1"/><circle cx="21.6" cy="499.3" r="1.1" fill="none" stroke="#2a2a2a" stroke-width="1"/>
<text x="29.60" y="501.40" font-size="14.5" fill="#2a2a2a" font-family="Liberation Sans" textLength="91.2" lengthAdjust="spacingAndGlyphs">2553, 19:31:00</text>
<rect x="0.00" y="599.00" width="1001.00" height="2.00" fill="#a0a0a0" />
<rect x="0.00" y="601.00" width="1001.00" height="32.00" fill="#f0f0f0" />
<path d="M-5,604 L-5,622 L55,622 L55,604" fill="#f0f0f0" stroke="#9a9a9a" stroke-width="1"/>
<line x1="-4.00" y1="623.00" x2="55.00" y2="623.00" stroke="#777" stroke-width="1.5" />
<text x="-2.50" y="619.00" font-size="12" fill="#333" font-family="Liberation Sans" textLength="50.5" lengthAdjust="spacingAndGlyphs">mponents</text>
<path d="M56.5,604 L56.5,622 L143.9,622 L143.9,604" fill="#f0f0f0" stroke="#9a9a9a" stroke-width="1"/>
<line x1="57.50" y1="623.00" x2="143.90" y2="623.00" stroke="#777" stroke-width="1.5" />
<text x="62.30" y="619.00" font-size="12" fill="#333" font-family="Liberation Sans" textLength="75.6" lengthAdjust="spacingAndGlyphs">Copper layers</text>
<path d="M146.9,604 L146.9,622 L220,622 L220,604" fill="#f0f0f0" stroke="#9a9a9a" stroke-width="1"/>
<line x1="147.90" y1="623.00" x2="220.00" y2="623.00" stroke="#777" stroke-width="1.5" />
<text x="151.40" y="619.00" font-size="12" fill="#333" font-family="Liberation Sans" >Simulation</text>
<rect x="0.00" y="633.20" width="1001.00" height="2.20" fill="#a2a2a2" />
<rect x="0.00" y="635.40" width="1001.00" height="20.80" fill="#efeeee" />
<rect x="0.00" y="656.20" width="1001.00" height="1.80" fill="#6f6f6f" />
<rect x="889.00" y="476.00" width="112.00" height="6.40" fill="#efefef" />
<rect x="890.50" y="482.40" width="102.00" height="120.60" fill="#fff" />
<line x1="890.50" y1="482.20" x2="995.50" y2="482.20" stroke="#6a6a6a" stroke-width="1.5" />
<line x1="890.50" y1="598.70" x2="991.20" y2="598.70" stroke="#a8a8a8" stroke-width="1.2" />
<line x1="991.20" y1="482.40" x2="991.20" y2="598.70" stroke="#a8a8a8" stroke-width="1.2" />
<line x1="890.50" y1="603.00" x2="995.50" y2="603.00" stroke="#6a6a6a" stroke-width="1.6" />
<line x1="995.50" y1="482.40" x2="995.50" y2="603.00" stroke="#6a6a6a" stroke-width="1.6" />
<rect x="891.00" y="603.80" width="110.00" height="29.40" fill="#efefef" />
<path d="M934.4,654 L934.4,641 L941.4,641" fill="none" stroke="#b4b4b4" stroke-width="1.6"/>
<path d="M943.4,654 L943.4,641 L950.4,641" fill="none" stroke="#b4b4b4" stroke-width="1.6"/>
<path d="M952.4,654 L952.4,641 L959.4,641" fill="none" stroke="#b4b4b4" stroke-width="1.6"/>
<path d="M961.4,654 L961.4,641 L968.4,641" fill="none" stroke="#b4b4b4" stroke-width="1.6"/>
<path d="M970.4,654 L970.4,641 L977.4,641" fill="none" stroke="#b4b4b4" stroke-width="1.6"/>
<path d="M979.4,654 L979.4,641 L986.4,641" fill="none" stroke="#b4b4b4" stroke-width="1.6"/>
<path d="M988.4,654 L988.4,641 L995.4,641" fill="none" stroke="#b4b4b4" stroke-width="1.6"/>
<rect x="944.00" y="441.00" width="57.00" height="35.00" fill="#f0f0f0" />
<rect x="944.00" y="447.60" width="7.50" height="16.70" fill="#f3f3f3" stroke="#b0b0b0" stroke-width="0.8"/>
<rect x="952.40" y="447.60" width="16.00" height="16.70" fill="#f3f3f3" stroke="#b0b0b0" stroke-width="0.8"/>
<path d="M957.5,451.5 L963,456 L957.5,460.5 Z" fill="#10108a"/>
<rect x="944.50" y="452.00" width="1.80" height="9.00" fill="#10108a" />
<line x1="944.00" y1="441.30" x2="972.00" y2="441.30" stroke="#8a8a8a" stroke-width="1.3" />
<path d="M987.5,456 L991,459 L994.5,456 M987.5,460.5 L991,463.5 L994.5,460.5" fill="none" stroke="#111" stroke-width="1.6"/>
<line x1="974.50" y1="440.80" x2="997.00" y2="440.80" stroke="#c0c0c0" stroke-width="1.2" />
<line x1="973.00" y1="468.00" x2="1001.00" y2="468.00" stroke="#c0c0c0" stroke-width="1.2" />
<path d="M47.3,471.2 L47.3,283.2 Q47.3,278.2 52.3,278.2 L263.3,278.2 Q268.3,278.2 268.3,283.2 L268.3,471.2 Z" fill="url(#frame)" stroke="#3c3c3c" stroke-width="1.2"/>
<rect x="55.60" y="311.20" width="204.40" height="151.00" fill="#f0f0f0" />
<text x="60.50" y="302.60" font-size="13.4" fill="#475665" font-family="Liberation Sans" textLength="110.5" lengthAdjust="spacingAndGlyphs">Multimeter-XMM1</text>
<rect x="226.60" y="289.50" width="31.20" height="15.80" fill="url(#closeG)" stroke="#8d9caf" stroke-width="1" rx="2"/>
<path d="M237.60000000000002,294.59999999999997 L245.60000000000002,300.59999999999997 M245.60000000000002,294.59999999999997 L237.60000000000002,300.59999999999997" stroke="#5d6672" stroke-width="5.2" stroke-linecap="round"/>
<path d="M237.60000000000002,294.59999999999997 L245.60000000000002,300.59999999999997 M245.60000000000002,294.59999999999997 L237.60000000000002,300.59999999999997" stroke="#f2f2f2" stroke-width="2.8" stroke-linecap="round"/>
<rect x="55.80" y="311.30" width="203.70" height="34.00" fill="#fbfbfb" />
<rect x="55.80" y="343.80" width="203.70" height="1.60" fill="#808080" />
<rect x="258.10" y="311.30" width="1.40" height="34.00" fill="#909090" />
<rect x="58.90" y="313.40" width="195.60" height="26.30" fill="#7a7a7a" />
<rect x="60.70" y="315.20" width="193.80" height="24.50" fill="#000" />
<text x="157.90" y="333.20" font-size="18.3" fill="#f4f4f4" font-family="Liberation Sans" text-anchor="middle">215.71 mA</text>
<rect x="64.00" y="355.80" width="187.50" height="29.20" fill="#f6f6f6" stroke="#e4e4e4" stroke-width="1"/>
<rect x="77.20" y="359.20" width="32.00" height="22.40" fill="url(#btnBlue)" stroke="#3d7ba8" stroke-width="1.2" rx="2.5"/>
<text x="93.20" y="375.00" font-size="12.5" fill="#2a2a2a" font-family="Liberation Sans" text-anchor="middle">A</text>
<rect x="118.90" y="359.20" width="32.00" height="22.40" fill="url(#btnGray)" stroke="#8f8f8f" stroke-width="1.2" rx="2.5"/>
<text x="134.90" y="375.00" font-size="12.5" fill="#2a2a2a" font-family="Liberation Sans" text-anchor="middle">V</text>
<rect x="161.80" y="359.20" width="32.00" height="22.40" fill="url(#btnGray)" stroke="#8f8f8f" stroke-width="1.2" rx="2.5"/>
<text x="177.80" y="375.00" font-size="12.5" fill="#2a2a2a" font-family="Liberation Sans" text-anchor="middle">Ω</text>
<rect x="205.80" y="359.20" width="32.00" height="22.40" fill="url(#btnGray)" stroke="#8f8f8f" stroke-width="1.2" rx="2.5"/>
<text x="221.80" y="375.00" font-size="12.5" fill="#2a2a2a" font-family="Liberation Sans" text-anchor="middle">dB</text>
<rect x="93.20" y="386.80" width="129.10" height="26.70" fill="#f6f6f6" stroke="#e4e4e4" stroke-width="1"/>
<rect x="104.00" y="393.30" width="48.00" height="15.40" fill="url(#btnBlue)" stroke="#3d7ba8" stroke-width="1.2" rx="2.5"/>
<rect x="166.50" y="393.30" width="44.40" height="15.40" fill="url(#btnGray)" stroke="#8f8f8f" stroke-width="1.2" rx="2.5"/>
<path d="M116.8,402.5 L122.3,398.5 L126.8,398.5 L132.3,403.5 L134.8,403.5 L138.8,400.5" fill="none" stroke="#111" stroke-width="1.6"/>
<line x1="177.30" y1="400.50" x2="200.80" y2="400.50" stroke="#111" stroke-width="2" />
<text x="72.30" y="435.20" font-size="14" fill="#333" font-family="Liberation Sans" text-anchor="middle">+</text>
<line x1="241.30" y1="435.40" x2="249.30" y2="435.40" stroke="#555" stroke-width="1.8" />
<circle cx="70.3" cy="447.79999999999995" r="6" fill="#f3f3f3" stroke="#aaa" stroke-width="1"/>
<circle cx="70.3" cy="447.79999999999995" r="3.2" fill="#c8c8c8" stroke="#999" stroke-width="0.8"/>
<circle cx="247.60000000000002" cy="447.79999999999995" r="6" fill="#f3f3f3" stroke="#aaa" stroke-width="1"/>
<circle cx="247.60000000000002" cy="447.79999999999995" r="3.2" fill="#c8c8c8" stroke="#999" stroke-width="0.8"/>
<rect x="118.30" y="428.40" width="79.00" height="18.00" fill="url(#btnGray)" stroke="#8f8f8f" stroke-width="1" rx="2.5"/>
<text x="157.80" y="441.70" font-size="12.5" fill="#222" font-family="Liberation Sans" text-anchor="middle">Set...</text>
<path d="M271.7,473.3 L271.7,285.3 Q271.7,280.3 276.7,280.3 L487.7,280.3 Q492.7,280.3 492.7,285.3 L492.7,473.3 Z" fill="url(#frame)" stroke="#3c3c3c" stroke-width="1.2"/>
<rect x="280.00" y="313.30" width="204.40" height="151.00" fill="#f0f0f0" />
<text x="284.90" y="304.70" font-size="13.4" fill="#475665" font-family="Liberation Sans" textLength="110.5" lengthAdjust="spacingAndGlyphs">Multimeter-XMM2</text>
<rect x="451.00" y="291.60" width="31.20" height="15.80" fill="url(#closeG)" stroke="#8d9caf" stroke-width="1" rx="2"/>
<path d="M462.0,296.7 L470.0,302.7 M470.0,296.7 L462.0,302.7" stroke="#5d6672" stroke-width="5.2" stroke-linecap="round"/>
<path d="M462.0,296.7 L470.0,302.7 M470.0,296.7 L462.0,302.7" stroke="#f2f2f2" stroke-width="2.8" stroke-linecap="round"/>
<rect x="280.20" y="313.40" width="203.70" height="34.00" fill="#fbfbfb" />
<rect x="280.20" y="345.90" width="203.70" height="1.60" fill="#808080" />
<rect x="482.50" y="313.40" width="1.40" height="34.00" fill="#909090" />
<rect x="283.30" y="315.50" width="195.60" height="26.30" fill="#7a7a7a" />
<rect x="285.10" y="317.30" width="193.80" height="24.50" fill="#000" />
<text x="382.30" y="335.30" font-size="18.3" fill="#f4f4f4" font-family="Liberation Sans" text-anchor="middle">120 mA</text>
<rect x="288.40" y="357.90" width="187.50" height="29.20" fill="#f6f6f6" stroke="#e4e4e4" stroke-width="1"/>
<rect x="301.60" y="361.30" width="32.00" height="22.40" fill="url(#btnBlue)" stroke="#3d7ba8" stroke-width="1.2" rx="2.5"/>
<text x="317.60" y="377.10" font-size="12.5" fill="#2a2a2a" font-family="Liberation Sans" text-anchor="middle">A</text>
<rect x="343.30" y="361.30" width="32.00" height="22.40" fill="url(#btnGray)" stroke="#8f8f8f" stroke-width="1.2" rx="2.5"/>
<text x="359.30" y="377.10" font-size="12.5" fill="#2a2a2a" font-family="Liberation Sans" text-anchor="middle">V</text>
<rect x="386.20" y="361.30" width="32.00" height="22.40" fill="url(#btnGray)" stroke="#8f8f8f" stroke-width="1.2" rx="2.5"/>
<text x="402.20" y="377.10" font-size="12.5" fill="#2a2a2a" font-family="Liberation Sans" text-anchor="middle">Ω</text>
<rect x="430.20" y="361.30" width="32.00" height="22.40" fill="url(#btnGray)" stroke="#8f8f8f" stroke-width="1.2" rx="2.5"/>
<text x="446.20" y="377.10" font-size="12.5" fill="#2a2a2a" font-family="Liberation Sans" text-anchor="middle">dB</text>
<rect x="317.60" y="388.90" width="129.10" height="26.70" fill="#f6f6f6" stroke="#e4e4e4" stroke-width="1"/>
<rect x="328.40" y="395.40" width="48.00" height="15.40" fill="url(#btnBlue)" stroke="#3d7ba8" stroke-width="1.2" rx="2.5"/>
<rect x="390.90" y="395.40" width="44.40" height="15.40" fill="url(#btnGray)" stroke="#8f8f8f" stroke-width="1.2" rx="2.5"/>
<path d="M341.2,404.6 L346.7,400.6 L351.2,400.6 L356.7,405.6 L359.2,405.6 L363.2,402.6" fill="none" stroke="#111" stroke-width="1.6"/>
<line x1="401.70" y1="402.60" x2="425.20" y2="402.60" stroke="#111" stroke-width="2" />
<text x="296.70" y="437.30" font-size="14" fill="#333" font-family="Liberation Sans" text-anchor="middle">+</text>
<line x1="465.70" y1="437.50" x2="473.70" y2="437.50" stroke="#555" stroke-width="1.8" />
<circle cx="294.7" cy="449.9" r="6" fill="#f3f3f3" stroke="#aaa" stroke-width="1"/>
<circle cx="294.7" cy="449.9" r="3.2" fill="#c8c8c8" stroke="#999" stroke-width="0.8"/>
<circle cx="472.0" cy="449.9" r="6" fill="#f3f3f3" stroke="#aaa" stroke-width="1"/>
<circle cx="472.0" cy="449.9" r="3.2" fill="#c8c8c8" stroke="#999" stroke-width="0.8"/>
<rect x="342.70" y="430.50" width="79.00" height="18.00" fill="url(#btnGray)" stroke="#8f8f8f" stroke-width="1" rx="2.5"/>
<text x="382.20" y="443.80" font-size="12.5" fill="#222" font-family="Liberation Sans" text-anchor="middle">Set...</text>
<path d="M496.3,473.5 L496.3,285.5 Q496.3,280.5 501.3,280.5 L712.3,280.5 Q717.3,280.5 717.3,285.5 L717.3,473.5 Z" fill="url(#frame)" stroke="#3c3c3c" stroke-width="1.2"/>
<rect x="504.60" y="313.50" width="204.40" height="151.00" fill="#f0f0f0" />
<text x="509.50" y="304.90" font-size="13.4" fill="#475665" font-family="Liberation Sans" textLength="110.5" lengthAdjust="spacingAndGlyphs">Multimeter-XMM3</text>
<rect x="675.60" y="291.80" width="31.20" height="15.80" fill="url(#closeG)" stroke="#8d9caf" stroke-width="1" rx="2"/>
<path d="M686.6,296.9 L694.6,302.9 M694.6,296.9 L686.6,302.9" stroke="#5d6672" stroke-width="5.2" stroke-linecap="round"/>
<path d="M686.6,296.9 L694.6,302.9 M694.6,296.9 L686.6,302.9" stroke="#f2f2f2" stroke-width="2.8" stroke-linecap="round"/>
<rect x="504.80" y="313.60" width="203.70" height="34.00" fill="#fbfbfb" />
<rect x="504.80" y="346.10" width="203.70" height="1.60" fill="#808080" />
<rect x="707.10" y="313.60" width="1.40" height="34.00" fill="#909090" />
<rect x="507.90" y="315.70" width="195.60" height="26.30" fill="#7a7a7a" />
<rect x="509.70" y="317.50" width="193.80" height="24.50" fill="#000" />
<text x="606.90" y="335.50" font-size="18.3" fill="#f4f4f4" font-family="Liberation Sans" text-anchor="middle">360.127 mA</text>
<rect x="513.00" y="358.10" width="187.50" height="29.20" fill="#f6f6f6" stroke="#e4e4e4" stroke-width="1"/>
<rect x="526.20" y="361.50" width="32.00" height="22.40" fill="url(#btnBlue)" stroke="#3d7ba8" stroke-width="1.2" rx="2.5"/>
<text x="542.20" y="377.30" font-size="12.5" fill="#2a2a2a" font-family="Liberation Sans" text-anchor="middle">A</text>
<rect x="567.90" y="361.50" width="32.00" height="22.40" fill="url(#btnGray)" stroke="#8f8f8f" stroke-width="1.2" rx="2.5"/>
<text x="583.90" y="377.30" font-size="12.5" fill="#2a2a2a" font-family="Liberation Sans" text-anchor="middle">V</text>
<rect x="610.80" y="361.50" width="32.00" height="22.40" fill="url(#btnGray)" stroke="#8f8f8f" stroke-width="1.2" rx="2.5"/>
<text x="626.80" y="377.30" font-size="12.5" fill="#2a2a2a" font-family="Liberation Sans" text-anchor="middle">Ω</text>
<rect x="654.80" y="361.50" width="32.00" height="22.40" fill="url(#btnGray)" stroke="#8f8f8f" stroke-width="1.2" rx="2.5"/>
<text x="670.80" y="377.30" font-size="12.5" fill="#2a2a2a" font-family="Liberation Sans" text-anchor="middle">dB</text>
<rect x="542.20" y="389.10" width="129.10" height="26.70" fill="#f6f6f6" stroke="#e4e4e4" stroke-width="1"/>
<rect x="553.00" y="395.60" width="48.00" height="15.40" fill="url(#btnGray)" stroke="#8f8f8f" stroke-width="1.2" rx="2.5"/>
<rect x="615.50" y="395.60" width="44.40" height="15.40" fill="url(#btnBlue)" stroke="#3d7ba8" stroke-width="1.2" rx="2.5"/>
<path d="M565.8,404.8 L571.3,400.8 L575.8,400.8 L581.3,405.8 L583.8,405.8 L587.8,402.8" fill="none" stroke="#111" stroke-width="1.6"/>
<line x1="626.30" y1="402.80" x2="649.80" y2="402.80" stroke="#111" stroke-width="2" />
<text x="521.30" y="437.50" font-size="14" fill="#333" font-family="Liberation Sans" text-anchor="middle">+</text>
<line x1="690.30" y1="437.70" x2="698.30" y2="437.70" stroke="#555" stroke-width="1.8" />
<circle cx="519.3" cy="450.1" r="6" fill="#f3f3f3" stroke="#aaa" stroke-width="1"/>
<circle cx="519.3" cy="450.1" r="3.2" fill="#c8c8c8" stroke="#999" stroke-width="0.8"/>
<circle cx="696.6" cy="450.1" r="6" fill="#f3f3f3" stroke="#aaa" stroke-width="1"/>
<circle cx="696.6" cy="450.1" r="3.2" fill="#c8c8c8" stroke="#999" stroke-width="0.8"/>
<rect x="567.30" y="430.70" width="79.00" height="18.00" fill="url(#btnGray)" stroke="#8f8f8f" stroke-width="1" rx="2.5"/>
<text x="606.80" y="444.00" font-size="12.5" fill="#222" font-family="Liberation Sans" text-anchor="middle">Set...</text>
<path d="M722.5,475.5 L722.5,287.5 Q722.5,282.5 727.5,282.5 L938.5,282.5 Q943.5,282.5 943.5,287.5 L943.5,475.5 Z" fill="url(#frame)" stroke="#3c3c3c" stroke-width="1.2"/>
<rect x="730.80" y="315.50" width="204.40" height="151.00" fill="#f0f0f0" />
<text x="735.70" y="306.90" font-size="13.4" fill="#475665" font-family="Liberation Sans" textLength="110.5" lengthAdjust="spacingAndGlyphs">Multimeter-XMM4</text>
<rect x="901.80" y="293.80" width="31.20" height="15.80" fill="url(#closeG)" stroke="#8d9caf" stroke-width="1" rx="2"/>
<path d="M912.8,298.9 L920.8,304.9 M920.8,298.9 L912.8,304.9" stroke="#5d6672" stroke-width="5.2" stroke-linecap="round"/>
<path d="M912.8,298.9 L920.8,304.9 M920.8,298.9 L912.8,304.9" stroke="#f2f2f2" stroke-width="2.8" stroke-linecap="round"/>
<rect x="731.00" y="315.60" width="203.70" height="34.00" fill="#fbfbfb" />
<rect x="731.00" y="348.10" width="203.70" height="1.60" fill="#808080" />
<rect x="933.30" y="315.60" width="1.40" height="34.00" fill="#909090" />
<rect x="734.10" y="317.70" width="195.60" height="26.30" fill="#7a7a7a" />
<rect x="735.90" y="319.50" width="193.80" height="24.50" fill="#000" />
<text x="833.10" y="337.50" font-size="18.3" fill="#f4f4f4" font-family="Liberation Sans" text-anchor="middle">75.398 mA</text>
<rect x="739.20" y="360.10" width="187.50" height="29.20" fill="#f6f6f6" stroke="#e4e4e4" stroke-width="1"/>
<rect x="752.40" y="363.50" width="32.00" height="22.40" fill="url(#btnBlue)" stroke="#3d7ba8" stroke-width="1.2" rx="2.5"/>
<text x="768.40" y="379.30" font-size="12.5" fill="#2a2a2a" font-family="Liberation Sans" text-anchor="middle">A</text>
<rect x="794.10" y="363.50" width="32.00" height="22.40" fill="url(#btnGray)" stroke="#8f8f8f" stroke-width="1.2" rx="2.5"/>
<text x="810.10" y="379.30" font-size="12.5" fill="#2a2a2a" font-family="Liberation Sans" text-anchor="middle">V</text>
<rect x="837.00" y="363.50" width="32.00" height="22.40" fill="url(#btnGray)" stroke="#8f8f8f" stroke-width="1.2" rx="2.5"/>
<text x="853.00" y="379.30" font-size="12.5" fill="#2a2a2a" font-family="Liberation Sans" text-anchor="middle">Ω</text>
<rect x="881.00" y="363.50" width="32.00" height="22.40" fill="url(#btnGray)" stroke="#8f8f8f" stroke-width="1.2" rx="2.5"/>
<text x="897.00" y="379.30" font-size="12.5" fill="#2a2a2a" font-family="Liberation Sans" text-anchor="middle">dB</text>
<rect x="768.40" y="391.10" width="129.10" height="26.70" fill="#f6f6f6" stroke="#e4e4e4" stroke-width="1"/>
<rect x="779.20" y="397.60" width="48.00" height="15.40" fill="url(#btnBlue)" stroke="#3d7ba8" stroke-width="1.2" rx="2.5"/>
<rect x="841.70" y="397.60" width="44.40" height="15.40" fill="url(#btnGray)" stroke="#8f8f8f" stroke-width="1.2" rx="2.5"/>
<path d="M792.0,406.8 L797.5,402.8 L802.0,402.8 L807.5,407.8 L810.0,407.8 L814.0,404.8" fill="none" stroke="#111" stroke-width="1.6"/>
<line x1="852.50" y1="404.80" x2="876.00" y2="404.80" stroke="#111" stroke-width="2" />
<text x="747.50" y="439.50" font-size="14" fill="#333" font-family="Liberation Sans" text-anchor="middle">+</text>
<line x1="916.50" y1="439.70" x2="924.50" y2="439.70" stroke="#555" stroke-width="1.8" />
<circle cx="745.5" cy="452.1" r="6" fill="#f3f3f3" stroke="#aaa" stroke-width="1"/>
<circle cx="745.5" cy="452.1" r="3.2" fill="#c8c8c8" stroke="#999" stroke-width="0.8"/>
<circle cx="922.8" cy="452.1" r="6" fill="#f3f3f3" stroke="#aaa" stroke-width="1"/>
<circle cx="922.8" cy="452.1" r="3.2" fill="#c8c8c8" stroke="#999" stroke-width="0.8"/>
<rect x="793.50" y="432.70" width="79.00" height="18.00" fill="url(#btnGray)" stroke="#8f8f8f" stroke-width="1" rx="2.5"/>
<text x="833.00" y="446.00" font-size="12.5" fill="#222" font-family="Liberation Sans" text-anchor="middle">Set...</text>
<rect x="932.1" y="455.1" width="1.8" height="1.8" fill="#b8b8b8"/>
<rect x="932.1" y="459.6" width="1.8" height="1.8" fill="#b8b8b8"/>
<rect x="932.1" y="464.1" width="1.8" height="1.8" fill="#b8b8b8"/>
<rect x="927.6" y="464.1" width="1.8" height="1.8" fill="#b8b8b8"/>
<rect x="923.1" y="464.1" width="1.8" height="1.8" fill="#b8b8b8"/>
<path d="M191.7,663 L191.7,422.5 Q191.7,417.5 196.7,417.5 L885.7,417.5 Q890.7,417.5 890.7,422.5 L890.7,663 Z" fill="url(#frameS)" stroke="#3c3c3c" stroke-width="1.2"/>
<text x="205.00" y="441.40" font-size="13.4" fill="#475665" font-family="Liberation Sans" textLength="174" lengthAdjust="spacingAndGlyphs">4 Channel Oscilloscope-XSC1</text>
<rect x="849.00" y="428.50" width="30.50" height="16.10" fill="url(#closeG)" stroke="#8d9caf" stroke-width="1" rx="2"/>
<path d="M860.3,433.8 L868.3,439.8 M868.3,433.8 L860.3,439.8" stroke="#5d6672" stroke-width="5.2" stroke-linecap="round"/>
<path d="M860.3,433.8 L868.3,439.8 M868.3,433.8 L860.3,439.8" stroke="#f2f2f2" stroke-width="2.8" stroke-linecap="round"/>
<rect x="200.60" y="448.70" width="681.00" height="210.00" fill="#f8f8f8" />
<rect x="200.60" y="448.70" width="681.00" height="3.30" fill="#8a8a8a" />
<rect x="200.60" y="448.70" width="3.20" height="210.00" fill="#8a8a8a" />
<rect x="203.80" y="452.00" width="675.20" height="206.00" fill="#000" />
<line x1="213.30" y1="461.70" x2="870.60" y2="461.70" stroke="#f0f0f0" stroke-width="1.4" />
<line x1="870.60" y1="461.70" x2="870.60" y2="658.00" stroke="#f0f0f0" stroke-width="1.4" />
<line x1="279.03" y1="463.20" x2="279.03" y2="658.00" stroke="#c8c8c8" stroke-width="1.2" stroke-dasharray="3.8 2.95"/>
<line x1="344.76" y1="463.20" x2="344.76" y2="658.00" stroke="#c8c8c8" stroke-width="1.2" stroke-dasharray="3.8 2.95"/>
<line x1="410.49" y1="463.20" x2="410.49" y2="658.00" stroke="#c8c8c8" stroke-width="1.2" stroke-dasharray="3.8 2.95"/>
<line x1="476.22" y1="463.20" x2="476.22" y2="658.00" stroke="#c8c8c8" stroke-width="1.2" stroke-dasharray="3.8 2.95"/>
<line x1="541.95" y1="463.20" x2="541.95" y2="658.00" stroke="#c8c8c8" stroke-width="1.2" stroke-dasharray="3.8 2.95"/>
<line x1="607.68" y1="463.20" x2="607.68" y2="658.00" stroke="#c8c8c8" stroke-width="1.2" stroke-dasharray="3.8 2.95"/>
<line x1="673.41" y1="463.20" x2="673.41" y2="658.00" stroke="#c8c8c8" stroke-width="1.2" stroke-dasharray="3.8 2.95"/>
<line x1="739.14" y1="463.20" x2="739.14" y2="658.00" stroke="#c8c8c8" stroke-width="1.2" stroke-dasharray="3.8 2.95"/>
<line x1="804.87" y1="463.20" x2="804.87" y2="658.00" stroke="#c8c8c8" stroke-width="1.2" stroke-dasharray="3.8 2.95"/>
<line x1="214.30" y1="506.30" x2="868.60" y2="506.30" stroke="#d0d0d0" stroke-width="1.2" stroke-dasharray="4 2.75"/>
<line x1="214.30" y1="551.50" x2="868.60" y2="551.50" stroke="#d0d0d0" stroke-width="1.2" stroke-dasharray="4 2.75"/>
<line x1="214.30" y1="641.00" x2="868.60" y2="641.00" stroke="#d0d0d0" stroke-width="1.2" stroke-dasharray="4 2.75"/>
<line x1="213.30" y1="596.30" x2="869.10" y2="596.30" stroke="#e6e6e6" stroke-width="1.7" />
<line x1="213.30" y1="594.10" x2="213.30" y2="598.50" stroke="#e6e6e6" stroke-width="1.1" />
<line x1="226.45" y1="594.10" x2="226.45" y2="598.50" stroke="#e6e6e6" stroke-width="1.1" />
<line x1="239.59" y1="594.10" x2="239.59" y2="598.50" stroke="#e6e6e6" stroke-width="1.1" />
<line x1="252.74" y1="594.10" x2="252.74" y2="598.50" stroke="#e6e6e6" stroke-width="1.1" />
<line x1="265.88" y1="594.10" x2="265.88" y2="598.50" stroke="#e6e6e6" stroke-width="1.1" />
<line x1="279.03" y1="594.10" x2="279.03" y2="598.50" stroke="#e6e6e6" stroke-width="1.1" />
<line x1="292.18" y1="594.10" x2="292.18" y2="598.50" stroke="#e6e6e6" stroke-width="1.1" />
<line x1="305.32" y1="594.10" x2="305.32" y2="598.50" stroke="#e6e6e6" stroke-width="1.1" />
<line x1="318.47" y1="594.10" x2="318.47" y2="598.50" stroke="#e6e6e6" stroke-width="1.1" />
<line x1="331.61" y1="594.10" x2="331.61" y2="598.50" stroke="#e6e6e6" stroke-width="1.1" />
<line x1="344.76" y1="594.10" x2="344.76" y2="598.50" stroke="#e6e6e6" stroke-width="1.1" />
<line x1="357.91" y1="594.10" x2="357.91" y2="598.50" stroke="#e6e6e6" stroke-width="1.1" />
<line x1="371.05" y1="594.10" x2="371.05" y2="598.50" stroke="#e6e6e6" stroke-width="1.1" />
<line x1="384.20" y1="594.10" x2="384.20" y2="598.50" stroke="#e6e6e6" stroke-width="1.1" />
<line x1="397.34" y1="594.10" x2="397.34" y2="598.50" stroke="#e6e6e6" stroke-width="1.1" />
<line x1="410.49" y1="594.10" x2="410.49" y2="598.50" stroke="#e6e6e6" stroke-width="1.1" />
<line x1="423.64" y1="594.10" x2="423.64" y2="598.50" stroke="#e6e6e6" stroke-width="1.1" />
<line x1="436.78" y1="594.10" x2="436.78" y2="598.50" stroke="#e6e6e6" stroke-width="1.1" />
<line x1="449.93" y1="594.10" x2="449.93" y2="598.50" stroke="#e6e6e6" stroke-width="1.1" />
<line x1="463.07" y1="594.10" x2="463.07" y2="598.50" stroke="#e6e6e6" stroke-width="1.1" />
<line x1="476.22" y1="594.10" x2="476.22" y2="598.50" stroke="#e6e6e6" stroke-width="1.1" />
<line x1="489.37" y1="594.10" x2="489.37" y2="598.50" stroke="#e6e6e6" stroke-width="1.1" />
<line x1="502.51" y1="594.10" x2="502.51" y2="598.50" stroke="#e6e6e6" stroke-width="1.1" />
<line x1="515.66" y1="594.10" x2="515.66" y2="598.50" stroke="#e6e6e6" stroke-width="1.1" />
<line x1="528.80" y1="594.10" x2="528.80" y2="598.50" stroke="#e6e6e6" stroke-width="1.1" />
<line x1="541.95" y1="594.10" x2="541.95" y2="598.50" stroke="#e6e6e6" stroke-width="1.1" />
<line x1="555.10" y1="594.10" x2="555.10" y2="598.50" stroke="#e6e6e6" stroke-width="1.1" />
<line x1="568.24" y1="594.10" x2="568.24" y2="598.50" stroke="#e6e6e6" stroke-width="1.1" />
<line x1="581.39" y1="594.10" x2="581.39" y2="598.50" stroke="#e6e6e6" stroke-width="1.1" />
<line x1="594.53" y1="594.10" x2="594.53" y2="598.50" stroke="#e6e6e6" stroke-width="1.1" />
<line x1="607.68" y1="594.10" x2="607.68" y2="598.50" stroke="#e6e6e6" stroke-width="1.1" />
<line x1="620.83" y1="594.10" x2="620.83" y2="598.50" stroke="#e6e6e6" stroke-width="1.1" />
<line x1="633.97" y1="594.10" x2="633.97" y2="598.50" stroke="#e6e6e6" stroke-width="1.1" />
<line x1="647.12" y1="594.10" x2="647.12" y2="598.50" stroke="#e6e6e6" stroke-width="1.1" />
<line x1="660.26" y1="594.10" x2="660.26" y2="598.50" stroke="#e6e6e6" stroke-width="1.1" />
<line x1="673.41" y1="594.10" x2="673.41" y2="598.50" stroke="#e6e6e6" stroke-width="1.1" />
<line x1="686.56" y1="594.10" x2="686.56" y2="598.50" stroke="#e6e6e6" stroke-width="1.1" />
<line x1="699.70" y1="594.10" x2="699.70" y2="598.50" stroke="#e6e6e6" stroke-width="1.1" />
<line x1="712.85" y1="594.10" x2="712.85" y2="598.50" stroke="#e6e6e6" stroke-width="1.1" />
<line x1="725.99" y1="594.10" x2="725.99" y2="598.50" stroke="#e6e6e6" stroke-width="1.1" />
<line x1="739.14" y1="594.10" x2="739.14" y2="598.50" stroke="#e6e6e6" stroke-width="1.1" />
<line x1="752.29" y1="594.10" x2="752.29" y2="598.50" stroke="#e6e6e6" stroke-width="1.1" />
<line x1="765.43" y1="594.10" x2="765.43" y2="598.50" stroke="#e6e6e6" stroke-width="1.1" />
<line x1="778.58" y1="594.10" x2="778.58" y2="598.50" stroke="#e6e6e6" stroke-width="1.1" />
<line x1="791.72" y1="594.10" x2="791.72" y2="598.50" stroke="#e6e6e6" stroke-width="1.1" />
<line x1="804.87" y1="594.10" x2="804.87" y2="598.50" stroke="#e6e6e6" stroke-width="1.1" />
<line x1="818.02" y1="594.10" x2="818.02" y2="598.50" stroke="#e6e6e6" stroke-width="1.1" />
<line x1="831.16" y1="594.10" x2="831.16" y2="598.50" stroke="#e6e6e6" stroke-width="1.1" />
<line x1="844.31" y1="594.10" x2="844.31" y2="598.50" stroke="#e6e6e6" stroke-width="1.1" />
<line x1="857.45" y1="594.10" x2="857.45" y2="598.50" stroke="#e6e6e6" stroke-width="1.1" />
<polyline points="213.50,500.20 214.50,500.31 215.50,500.64 216.50,501.19 217.50,501.95 218.50,502.94 219.50,504.13 220.50,505.54 221.50,507.15 222.50,508.97 223.50,510.99 224.50,513.20 225.50,515.60 226.50,518.19 227.50,520.96 228.50,523.90 229.50,527.00 230.50,530.26 231.50,533.68 232.50,537.23 233.50,540.93 234.50,544.74 235.50,548.68 236.50,552.73 237.50,556.87 238.50,561.11 239.50,565.43 240.50,569.81 241.50,574.26 242.50,578.76 243.50,583.30 244.50,587.86 245.50,592.45 246.50,597.05 247.50,601.64 248.50,606.22 249.50,610.78 250.50,615.31 251.50,619.79 252.50,624.22 253.50,628.59 254.50,632.88 255.50,637.08 256.50,641.20 257.50,645.21 258.50,649.11 259.50,652.89 260.50,656.54 261.50,660.05 262.50,663.41 263.50,666.63 264.50,669.68 265.50,672.56 266.50,675.27 267.50,677.80 268.50,680.14 269.50,682.29 270.50,684.24 271.50,686.00 272.50,687.54 273.50,688.88 274.50,690.01 275.50,690.92 276.50,691.61 277.50,692.09 278.50,692.35 279.50,692.39 280.50,692.21 281.50,691.81 282.50,691.19 283.50,690.35 284.50,689.30 285.50,688.03 286.50,686.56 287.50,684.88 288.50,683.00 289.50,680.92 290.50,678.64 291.50,676.18 292.50,673.53 293.50,670.71 294.50,667.71 295.50,664.56 296.50,661.24 297.50,657.78 298.50,654.18 299.50,650.45 300.50,646.59 301.50,642.61 302.50,638.54 303.50,634.36 304.50,630.10 305.50,625.76 306.50,621.35 307.50,616.88 308.50,612.37 309.50,607.82 310.50,603.25 311.50,598.66 312.50,594.06 313.50,589.47 314.50,584.89 315.50,580.34 316.50,575.83 317.50,571.36 318.50,566.95 319.50,562.61 320.50,558.35 321.50,554.17 322.50,550.09 323.50,546.11 324.50,542.25 325.50,538.51 326.50,534.91 327.50,531.44 328.50,528.12 329.50,524.96 330.50,521.97 331.50,519.14 332.50,516.49 333.50,514.02 334.50,511.74 335.50,509.65 336.50,507.76 337.50,506.08 338.50,504.60 339.50,503.33 340.50,502.27 341.50,501.43 342.50,500.81 343.50,500.40 344.50,500.21 345.50,500.25 346.50,500.50 347.50,500.97 348.50,501.66 349.50,502.57 350.50,503.69 351.50,505.02 352.50,506.56 353.50,508.31 354.50,510.26 355.50,512.40 356.50,514.74 357.50,517.26 358.50,519.97 359.50,522.85 360.50,525.89 361.50,529.10 362.50,532.46 363.50,535.97 364.50,539.62 365.50,543.39 366.50,547.29 367.50,551.30 368.50,555.41 369.50,559.62 370.50,563.91 371.50,568.27 372.50,572.70 373.50,577.18 374.50,581.70 375.50,586.26 376.50,590.84 377.50,595.44 378.50,600.03 379.50,604.62 380.50,609.19 381.50,613.73 382.50,618.23 383.50,622.68 384.50,627.07 385.50,631.38 386.50,635.62 387.50,639.77 388.50,643.82 389.50,647.76 390.50,651.58 391.50,655.28 392.50,658.84 393.50,662.25 394.50,665.52 395.50,668.63 396.50,671.57 397.50,674.34 398.50,676.93 399.50,679.34 400.50,681.56 401.50,683.58 402.50,685.41 403.50,687.02 404.50,688.44 405.50,689.64 406.50,690.62 407.50,691.40 408.50,691.95 409.50,692.28 410.50,692.40 411.50,692.30 412.50,691.97 413.50,691.43 414.50,690.67 415.50,689.69 416.50,688.50 417.50,687.10 418.50,685.49 419.50,683.68 420.50,681.67 421.50,679.46 422.50,677.06 423.50,674.48 424.50,671.71 425.50,668.78 426.50,665.68 427.50,662.42 428.50,659.01 429.50,655.46 430.50,651.77 431.50,647.95 432.50,644.02 433.50,639.97 434.50,635.83 435.50,631.60 436.50,627.28 437.50,622.90 438.50,618.45 439.50,613.96 440.50,609.42 441.50,604.85 442.50,600.26 443.50,595.67 444.50,591.07 445.50,586.49 446.50,581.93 447.50,577.40 448.50,572.92 449.50,568.49 450.50,564.12 451.50,559.83 452.50,555.62 453.50,551.50 454.50,547.49 455.50,543.59 456.50,539.80 457.50,536.15 458.50,532.64 459.50,529.27 460.50,526.05 461.50,523.00 462.50,520.11 463.50,517.39 464.50,514.86 465.50,512.52 466.50,510.36 467.50,508.40 468.50,506.65 469.50,505.09 470.50,503.75 471.50,502.62 472.50,501.70 473.50,501.00 474.50,500.52 475.50,500.25 476.50,500.21 477.50,500.39 478.50,500.78 479.50,501.39 480.50,502.23 481.50,503.27 482.50,504.53 483.50,506.00 484.50,507.68 485.50,509.55 486.50,511.63 487.50,513.90 488.50,516.36 489.50,519.00 490.50,521.82 491.50,524.81 492.50,527.96 493.50,531.27 494.50,534.73 495.50,538.33 496.50,542.06 497.50,545.91 498.50,549.88 499.50,553.96 500.50,558.14 501.50,562.40 502.50,566.73 503.50,571.14 504.50,575.60 505.50,580.12 506.50,584.66 507.50,589.24 508.50,593.83 509.50,598.43 510.50,603.02 511.50,607.59 512.50,612.14 513.50,616.66 514.50,621.13 515.50,625.54 516.50,629.88 517.50,634.15 518.50,638.33 519.50,642.41 520.50,646.39 521.50,650.26 522.50,654.00 523.50,657.61 524.50,661.07 525.50,664.40 526.50,667.56 527.50,670.56 528.50,673.39 529.50,676.05 530.50,678.52 531.50,680.81 532.50,682.90 533.50,684.79 534.50,686.48 535.50,687.97 536.50,689.24 537.50,690.30 538.50,691.15 539.50,691.78 540.50,692.19 541.50,692.38 542.50,692.36 543.50,692.11 544.50,691.64 545.50,690.96 546.50,690.06 547.50,688.94 548.50,687.61 549.50,686.08 550.50,684.34 551.50,682.39 552.50,680.25 553.50,677.92 554.50,675.40 555.50,672.70 556.50,669.83 557.50,666.78 558.50,663.58 559.50,660.22 560.50,656.72 561.50,653.07 562.50,649.30 563.50,645.41 564.50,641.40 565.50,637.29 566.50,633.09 567.50,628.80 568.50,624.44 569.50,620.01 570.50,615.53 571.50,611.01 572.50,606.45 573.50,601.87 574.50,597.28 575.50,592.68 576.50,588.09 577.50,583.52 578.50,578.98 579.50,574.48 580.50,570.03 581.50,565.64 582.50,561.32 583.50,557.08 584.50,552.93 585.50,548.88 586.50,544.94 587.50,541.11 588.50,537.42 589.50,533.85 590.50,530.43 591.50,527.16 592.50,524.05 593.50,521.10 594.50,518.32 595.50,515.73 596.50,513.32 597.50,511.09 598.50,509.07 599.50,507.24 600.50,505.61 601.50,504.20 602.50,502.99 603.50,502.00 604.50,501.22 605.50,500.66 606.50,500.32 607.50,500.20 608.50,500.30 609.50,500.62 610.50,501.16 611.50,501.91 612.50,502.88 613.50,504.07 614.50,505.46 615.50,507.07 616.50,508.87 617.50,510.88 618.50,513.08 619.50,515.48 620.50,518.06 621.50,520.81 622.50,523.74 623.50,526.84 624.50,530.10 625.50,533.50 626.50,537.05 627.50,540.74 628.50,544.55 629.50,548.48 630.50,552.52 631.50,556.66 632.50,560.90 633.50,565.21 634.50,569.59 635.50,574.04 636.50,578.53 637.50,583.07 638.50,587.63 639.50,592.22 640.50,596.82 641.50,601.41 642.50,605.99 643.50,610.56 644.50,615.08 645.50,619.57 646.50,624.00 647.50,628.37 648.50,632.66 649.50,636.88 650.50,641.00 651.50,645.01 652.50,648.92 653.50,652.70 654.50,656.36 655.50,659.88 656.50,663.25 657.50,666.47 658.50,669.53 659.50,672.42 660.50,675.14 661.50,677.68 662.50,680.03 663.50,682.19 664.50,684.15 665.50,685.91 666.50,687.47 667.50,688.82 668.50,689.96 669.50,690.88 670.50,691.58 671.50,692.07 672.50,692.34 673.50,692.39 674.50,692.22 675.50,691.83 676.50,691.22 677.50,690.40 678.50,689.36 679.50,688.10 680.50,686.64 681.50,684.97 682.50,683.10 683.50,681.02 684.50,678.76 685.50,676.30 686.50,673.67 687.50,670.85 688.50,667.87 689.50,664.72 690.50,661.41 691.50,657.96 692.50,654.36 693.50,650.64 694.50,646.78 695.50,642.82 696.50,638.74 697.50,634.57 698.50,630.31 699.50,625.97 700.50,621.57 701.50,617.11 702.50,612.60 703.50,608.05 704.50,603.48 705.50,598.89 706.50,594.29 707.50,589.70 708.50,585.12 709.50,580.57 710.50,576.05 711.50,571.58 712.50,567.17 713.50,562.83 714.50,558.56 715.50,554.37 716.50,550.29 717.50,546.31 718.50,542.44 719.50,538.69 720.50,535.08 721.50,531.61 722.50,528.29 723.50,525.12 724.50,522.11 725.50,519.28 726.50,516.62 727.50,514.14 728.50,511.85 729.50,509.75 730.50,507.85 731.50,506.16 732.50,504.67 733.50,503.39 734.50,502.32 735.50,501.47 736.50,500.83 737.50,500.42 738.50,500.22 739.50,500.24 740.50,500.48 741.50,500.94 742.50,501.62 743.50,502.52 744.50,503.63 745.50,504.95 746.50,506.48 747.50,508.22 748.50,510.16 749.50,512.29 750.50,514.62 751.50,517.13 752.50,519.83 753.50,522.70 754.50,525.74 755.50,528.94 756.50,532.29 757.50,535.79 758.50,539.43 759.50,543.20 760.50,547.09 761.50,551.10 762.50,555.20 763.50,559.40 764.50,563.69 765.50,568.05 766.50,572.47 767.50,576.95 768.50,581.48 769.50,586.03 770.50,590.61 771.50,595.21 772.50,599.80 773.50,604.39 774.50,608.96 775.50,613.50 776.50,618.00 777.50,622.46 778.50,626.85 779.50,631.17 780.50,635.41 781.50,639.56 782.50,643.62" fill="none" stroke="#958040" stroke-width="1.15" stroke-linejoin="miter" />
<polyline points="213.50,596.30 214.50,592.61 215.50,588.94 216.50,585.27 217.50,581.64 218.50,578.03 219.50,574.47 220.50,570.96 221.50,567.51 222.50,564.12 223.50,560.81 224.50,557.58 225.50,554.43 226.50,551.39 227.50,548.44 228.50,545.60 229.50,542.88 230.50,540.29 231.50,537.82 232.50,535.48 233.50,533.29 234.50,531.23 235.50,529.33 236.50,527.58 237.50,525.99 238.50,524.56 239.50,523.29 240.50,522.19 241.50,521.26 242.50,520.50 243.50,519.91 244.50,519.50 245.50,519.26 246.50,519.20 247.50,519.32 248.50,519.61 249.50,520.08 250.50,520.72 251.50,521.54 252.50,522.53 253.50,523.68 254.50,525.00 255.50,526.49 256.50,528.13 257.50,529.93 258.50,531.88 259.50,533.98 260.50,536.23 261.50,538.61 262.50,541.12 263.50,543.76 264.50,546.51 265.50,549.39 266.50,552.37 267.50,555.44 268.50,558.62 269.50,561.88 270.50,565.22 271.50,568.63 272.50,572.10 273.50,575.63 274.50,579.20 275.50,582.82 276.50,586.46 277.50,590.13 278.50,593.81 279.50,597.50 280.50,601.18 281.50,604.86 282.50,608.51 283.50,612.14 284.50,615.73 285.50,619.27 286.50,622.77 287.50,626.20 288.50,629.56 289.50,632.85 290.50,636.05 291.50,639.17 292.50,642.18 293.50,645.09 294.50,647.89 295.50,650.57 296.50,653.13 297.50,655.56 298.50,657.85 299.50,660.00 300.50,662.00 301.50,663.86 302.50,665.55 303.50,667.10 304.50,668.47 305.50,669.69 306.50,670.73 307.50,671.61 308.50,672.31 309.50,672.84 310.50,673.20 311.50,673.38 312.50,673.38 313.50,673.20 314.50,672.85 315.50,672.33 316.50,671.63 317.50,670.76 318.50,669.72 319.50,668.51 320.50,667.13 321.50,665.60 322.50,663.90 323.50,662.05 324.50,660.05 325.50,657.90 326.50,655.61 327.50,653.19 328.50,650.64 329.50,647.96 330.50,645.16 331.50,642.26 332.50,639.24 333.50,636.13 334.50,632.93 335.50,629.65 336.50,626.28 337.50,622.85 338.50,619.36 339.50,615.82 340.50,612.23 341.50,608.60 342.50,604.95 343.50,601.28 344.50,597.59 345.50,593.90 346.50,590.22 347.50,586.55 348.50,582.91 349.50,579.29 350.50,575.71 351.50,572.19 352.50,568.71 353.50,565.30 354.50,561.96 355.50,558.70 356.50,555.52 357.50,552.44 358.50,549.46 359.50,546.58 360.50,543.82 361.50,541.18 362.50,538.67 363.50,536.28 364.50,534.04 365.50,531.94 366.50,529.98 367.50,528.18 368.50,526.53 369.50,525.04 370.50,523.71 371.50,522.55 372.50,521.56 373.50,520.74 374.50,520.09 375.50,519.62 376.50,519.32 377.50,519.20 378.50,519.26 379.50,519.49 380.50,519.90 381.50,520.48 382.50,521.23 383.50,522.16 384.50,523.26 385.50,524.52 386.50,525.95 387.50,527.54 388.50,529.28 389.50,531.18 390.50,533.23 391.50,535.43 392.50,537.76 393.50,540.22 394.50,542.82 395.50,545.54 396.50,548.37 397.50,551.31 398.50,554.36 399.50,557.50 400.50,560.73 401.50,564.04 402.50,567.42 403.50,570.88 404.50,574.39 405.50,577.95 406.50,581.55 407.50,585.18 408.50,588.84 409.50,592.52 410.50,596.21 411.50,599.89 412.50,603.57 413.50,607.24 414.50,610.87 415.50,614.48 416.50,618.04 417.50,621.55 418.50,625.00 419.50,628.39 420.50,631.71 421.50,634.94 422.50,638.09 423.50,641.14 424.50,644.09 425.50,646.93 426.50,649.65 427.50,652.25 428.50,654.72 429.50,657.06 430.50,659.26 431.50,661.32 432.50,663.22 433.50,664.98 434.50,666.57 435.50,668.01 436.50,669.28 437.50,670.39 438.50,671.32 439.50,672.09 440.50,672.68 441.50,673.09 442.50,673.33 443.50,673.40 444.50,673.29 445.50,673.00 446.50,672.53 447.50,671.89 448.50,671.08 449.50,670.10 450.50,668.95 451.50,667.63 452.50,666.15 453.50,664.51 454.50,662.71 455.50,660.77 456.50,658.67 457.50,656.43 458.50,654.05 459.50,651.55 460.50,648.91 461.50,646.16 462.50,643.29 463.50,640.31 464.50,637.23 465.50,634.06 466.50,630.80 467.50,627.47 468.50,624.06 469.50,620.59 470.50,617.06 471.50,613.49 472.50,609.87 473.50,606.23 474.50,602.56 475.50,598.88 476.50,595.19 477.50,591.51 478.50,587.83 479.50,584.18 480.50,580.55 481.50,576.96 482.50,573.41 483.50,569.92 484.50,566.49 485.50,563.12 486.50,559.83 487.50,556.62 488.50,553.51 489.50,550.49 490.50,547.58 491.50,544.78 492.50,542.09 493.50,539.53 494.50,537.10 495.50,534.81 496.50,532.66 497.50,530.65 498.50,528.79 499.50,527.09 500.50,525.54 501.50,524.16 502.50,522.94 503.50,521.89 504.50,521.01 505.50,520.30 506.50,519.77 507.50,519.41 508.50,519.23 509.50,519.22 510.50,519.39 511.50,519.73 512.50,520.26 513.50,520.95 514.50,521.82 515.50,522.85 516.50,524.06 517.50,525.43 518.50,526.96 519.50,528.66 520.50,530.50 521.50,532.50 522.50,534.64 523.50,536.93 524.50,539.35 525.50,541.90 526.50,544.57 527.50,547.36 528.50,550.27 529.50,553.28 530.50,556.39 531.50,559.59 532.50,562.87 533.50,566.23 534.50,569.66 535.50,573.15 536.50,576.69 537.50,580.28 538.50,583.91 539.50,587.56 540.50,591.23 541.50,594.92 542.50,598.60 543.50,602.29 544.50,605.96 545.50,609.60 546.50,613.22 547.50,616.80 548.50,620.33 549.50,623.80 550.50,627.22 551.50,630.56 552.50,633.82 553.50,637.00 554.50,640.08 555.50,643.07 556.50,645.95 557.50,648.71 558.50,651.35 559.50,653.87 560.50,656.26 561.50,658.51 562.50,660.61 563.50,662.57 564.50,664.38 565.50,666.03 566.50,667.53 567.50,668.86 568.50,670.02 569.50,671.02 570.50,671.84 571.50,672.49 572.50,672.97 573.50,673.27 574.50,673.40 575.50,673.35 576.50,673.12 577.50,672.72 578.50,672.14 579.50,671.39 580.50,670.46 581.50,669.37 582.50,668.11 583.50,666.69 584.50,665.10 585.50,663.36 586.50,661.46 587.50,659.42 588.50,657.23 589.50,654.90 590.50,652.44 591.50,649.85 592.50,647.13 593.50,644.30 594.50,641.36 595.50,638.32 596.50,635.18 597.50,631.95 598.50,628.64 599.50,625.26 600.50,621.81 601.50,618.30 602.50,614.74 603.50,611.14 604.50,607.51 605.50,603.85 606.50,600.17 607.50,596.48 608.50,592.80 609.50,589.12 610.50,585.46 611.50,581.82 612.50,578.21 613.50,574.65 614.50,571.14 615.50,567.68 616.50,564.29 617.50,560.97 618.50,557.74 619.50,554.59 620.50,551.54 621.50,548.59 622.50,545.74 623.50,543.02 624.50,540.41 625.50,537.94 626.50,535.60 627.50,533.39 628.50,531.33 629.50,529.42 630.50,527.66 631.50,526.06 632.50,524.62 633.50,523.35 634.50,522.24 635.50,521.30 636.50,520.53 637.50,519.93 638.50,519.51 639.50,519.27 640.50,519.20 641.50,519.31 642.50,519.59 643.50,520.05 644.50,520.69 645.50,521.49 646.50,522.47 647.50,523.62 648.50,524.93 649.50,526.41 650.50,528.05 651.50,529.84 652.50,531.78 653.50,533.88 654.50,536.11 655.50,538.48 656.50,540.99 657.50,543.62 658.50,546.37 659.50,549.24 660.50,552.21 661.50,555.29 662.50,558.46 663.50,561.71 664.50,565.05 665.50,568.45 666.50,571.92 667.50,575.45 668.50,579.02 669.50,582.63 670.50,586.28 671.50,589.95 672.50,593.63 673.50,597.31 674.50,601.00 675.50,604.67 676.50,608.33 677.50,611.96 678.50,615.55 679.50,619.10 680.50,622.59 681.50,626.03 682.50,629.40 683.50,632.69 684.50,635.90 685.50,639.01 686.50,642.03 687.50,644.95 688.50,647.76 689.50,650.44 690.50,653.00 691.50,655.44 692.50,657.74 693.50,659.89 694.50,661.90 695.50,663.77 696.50,665.47 697.50,667.02 698.50,668.41 699.50,669.63 700.50,670.69 701.50,671.57 702.50,672.28 703.50,672.82 704.50,673.18 705.50,673.37 706.50,673.38 707.50,673.22 708.50,672.88 709.50,672.36 710.50,671.67 711.50,670.81 712.50,669.77 713.50,668.57 714.50,667.20 715.50,665.68 716.50,663.99 717.50,662.15 718.50,660.15 719.50,658.01 720.50,655.73 721.50,653.32 722.50,650.77 723.50,648.10 724.50,645.31 725.50,642.41 726.50,639.40 727.50,636.29 728.50,633.09 729.50,629.81 730.50,626.45 731.50,623.03 732.50,619.54 733.50,616.00 734.50,612.41 735.50,608.78 736.50,605.13 737.50,601.46 738.50,597.78 739.50,594.09 740.50,590.40 741.50,586.74 742.50,583.09 743.50,579.47 744.50,575.89 745.50,572.36 746.50,568.88 747.50,565.47 748.50,562.13 749.50,558.86 750.50,555.68 751.50,552.59 752.50,549.61 753.50,546.73 754.50,543.96 755.50,541.31 756.50,538.79 757.50,536.40 758.50,534.15 759.50,532.04 760.50,530.07 761.50,528.26 762.50,526.61 763.50,525.11 764.50,523.77 765.50,522.61 766.50,521.61 767.50,520.78 768.50,520.12 769.50,519.64 770.50,519.34 771.50,519.20 772.50,519.25 773.50,519.47 774.50,519.87 775.50,520.45 776.50,521.19 777.50,522.11 778.50,523.20 779.50,524.45 780.50,525.87 781.50,527.46 782.50,529.19" fill="none" stroke="#2424c8" stroke-width="2" stroke-linejoin="miter" />
<polyline points="213.50,596.30 214.50,596.26 215.50,596.15 216.50,595.97 217.50,595.71 218.50,595.37 219.50,594.97 220.50,594.49 221.50,593.95 222.50,593.33 223.50,592.65 224.50,591.90 225.50,591.09 226.50,590.22 227.50,589.28 228.50,588.29 229.50,587.24 230.50,586.13 231.50,584.98 232.50,583.78 233.50,582.53 234.50,581.24 235.50,579.90 236.50,578.54 237.50,577.13 238.50,575.70 239.50,574.24 240.50,572.76 241.50,571.25 242.50,569.73 243.50,568.20 244.50,566.65 245.50,565.10 246.50,563.55 247.50,561.99 248.50,560.44 249.50,558.90 250.50,557.37 251.50,555.86 252.50,554.36 253.50,552.88 254.50,551.43 255.50,550.01 256.50,548.62 257.50,547.26 258.50,545.94 259.50,544.66 260.50,543.43 261.50,542.24 262.50,541.10 263.50,540.02 264.50,538.98 265.50,538.01 266.50,537.09 267.50,536.24 268.50,535.45 269.50,534.72 270.50,534.06 271.50,533.47 272.50,532.94 273.50,532.49 274.50,532.11 275.50,531.80 276.50,531.57 277.50,531.40 278.50,531.32 279.50,531.30 280.50,531.37 281.50,531.50 282.50,531.71 283.50,531.99 284.50,532.35 285.50,532.78 286.50,533.27 287.50,533.84 288.50,534.48 289.50,535.18 290.50,535.95 291.50,536.79 292.50,537.68 293.50,538.64 294.50,539.65 295.50,540.72 296.50,541.84 297.50,543.01 298.50,544.23 299.50,545.49 300.50,546.79 301.50,548.14 302.50,549.52 303.50,550.93 304.50,552.37 305.50,553.84 306.50,555.33 307.50,556.84 308.50,558.36 309.50,559.90 310.50,561.45 311.50,563.00 312.50,564.56 313.50,566.11 314.50,567.66 315.50,569.20 316.50,570.72 317.50,572.23 318.50,573.72 319.50,575.19 320.50,576.64 321.50,578.05 322.50,579.43 323.50,580.77 324.50,582.08 325.50,583.34 326.50,584.56 327.50,585.73 328.50,586.86 329.50,587.93 330.50,588.94 331.50,589.90 332.50,590.79 333.50,591.63 334.50,592.40 335.50,593.10 336.50,593.74 337.50,594.31 338.50,594.81 339.50,595.24 340.50,595.60 341.50,595.88 342.50,596.09 343.50,596.23 344.50,596.30 345.50,596.28 346.50,596.20 347.50,596.04 348.50,595.81 349.50,595.50 350.50,595.12 351.50,594.67 352.50,594.15 353.50,593.56 354.50,592.90 355.50,592.17 356.50,591.38 357.50,590.53 358.50,589.61 359.50,588.64 360.50,587.61 361.50,586.53 362.50,585.39 363.50,584.20 364.50,582.97 365.50,581.69 366.50,580.37 367.50,579.02 368.50,577.63 369.50,576.21 370.50,574.76 371.50,573.28 372.50,571.78 373.50,570.27 374.50,568.74 375.50,567.19 376.50,565.65 377.50,564.09 378.50,562.54 379.50,560.99 380.50,559.44 381.50,557.91 382.50,556.38 383.50,554.88 384.50,553.40 385.50,551.94 386.50,550.50 387.50,549.10 388.50,547.73 389.50,546.40 390.50,545.10 391.50,543.86 392.50,542.65 393.50,541.50 394.50,540.39 395.50,539.34 396.50,538.34 397.50,537.41 398.50,536.53 399.50,535.72 400.50,534.97 401.50,534.28 402.50,533.67 403.50,533.12 404.50,532.64 405.50,532.23 406.50,531.90 407.50,531.64 408.50,531.45 409.50,531.34 410.50,531.30 411.50,531.34 412.50,531.44 413.50,531.63 414.50,531.89 415.50,532.22 416.50,532.62 417.50,533.09 418.50,533.64 419.50,534.25 420.50,534.93 421.50,535.68 422.50,536.49 423.50,537.36 424.50,538.30 425.50,539.29 426.50,540.34 427.50,541.44 428.50,542.59 429.50,543.79 430.50,545.04 431.50,546.33 432.50,547.66 433.50,549.03 434.50,550.43 435.50,551.86 436.50,553.32 437.50,554.80 438.50,556.31 439.50,557.83 440.50,559.36 441.50,560.91 442.50,562.46 443.50,564.01 444.50,565.57 445.50,567.12 446.50,568.66 447.50,570.19 448.50,571.71 449.50,573.21 450.50,574.68 451.50,576.13 452.50,577.56 453.50,578.95 454.50,580.31 455.50,581.63 456.50,582.91 457.50,584.14 458.50,585.33 459.50,586.47 460.50,587.56 461.50,588.59 462.50,589.57 463.50,590.48 464.50,591.34 465.50,592.13 466.50,592.86 467.50,593.53 468.50,594.12 469.50,594.65 470.50,595.10 471.50,595.48 472.50,595.79 473.50,596.03 474.50,596.19 475.50,596.28 476.50,596.30 477.50,596.24 478.50,596.10 479.50,595.90 480.50,595.61 481.50,595.26 482.50,594.84 483.50,594.34 484.50,593.77 485.50,593.14 486.50,592.43 487.50,591.67 488.50,590.83 489.50,589.94 490.50,588.99 491.50,587.98 492.50,586.91 493.50,585.79 494.50,584.62 495.50,583.41 496.50,582.14 497.50,580.84 498.50,579.50 499.50,578.12 500.50,576.71 501.50,575.27 502.50,573.80 503.50,572.31 504.50,570.80 505.50,569.27 506.50,567.74 507.50,566.19 508.50,564.64 509.50,563.08 510.50,561.53 511.50,559.98 512.50,558.44 513.50,556.91 514.50,555.40 515.50,553.91 516.50,552.44 517.50,551.00 518.50,549.59 519.50,548.21 520.50,546.86 521.50,545.55 522.50,544.29 523.50,543.07 524.50,541.89 525.50,540.77 526.50,539.70 527.50,538.69 528.50,537.73 529.50,536.83 530.50,535.99 531.50,535.22 532.50,534.51 533.50,533.87 534.50,533.30 535.50,532.80 536.50,532.37 537.50,532.01 538.50,531.72 539.50,531.51 540.50,531.37 541.50,531.31 542.50,531.31 543.50,531.40 544.50,531.56 545.50,531.79 546.50,532.09 547.50,532.47 548.50,532.92 549.50,533.44 550.50,534.03 551.50,534.68 552.50,535.41 553.50,536.20 554.50,537.05 555.50,537.96 556.50,538.93 557.50,539.96 558.50,541.05 559.50,542.18 560.50,543.37 561.50,544.60 562.50,545.88 563.50,547.19 564.50,548.55 565.50,549.94 566.50,551.36 567.50,552.81 568.50,554.28 569.50,555.78 570.50,557.30 571.50,558.83 572.50,560.37 573.50,561.92 574.50,563.47 575.50,565.02 576.50,566.58 577.50,568.12 578.50,569.66 579.50,571.18 580.50,572.68 581.50,574.17 582.50,575.63 583.50,577.06 584.50,578.47 585.50,579.84 586.50,581.17 587.50,582.46 588.50,583.71 589.50,584.92 590.50,586.08 591.50,587.18 592.50,588.24 593.50,589.23 594.50,590.17 595.50,591.05 596.50,591.86 597.50,592.62 598.50,593.30 599.50,593.92 600.50,594.47 601.50,594.95 602.50,595.36 603.50,595.69 604.50,595.95 605.50,596.14 606.50,596.26 607.50,596.30 608.50,596.27 609.50,596.16 610.50,595.98 611.50,595.72 612.50,595.39 613.50,594.99 614.50,594.52 615.50,593.98 616.50,593.37 617.50,592.69 618.50,591.94 619.50,591.13 620.50,590.26 621.50,589.33 622.50,588.34 623.50,587.29 624.50,586.19 625.50,585.04 626.50,583.84 627.50,582.59 628.50,581.30 629.50,579.97 630.50,578.60 631.50,577.20 632.50,575.77 633.50,574.31 634.50,572.83 635.50,571.33 636.50,569.81 637.50,568.27 638.50,566.73 639.50,565.18 640.50,563.63 641.50,562.07 642.50,560.52 643.50,558.98 644.50,557.45 645.50,555.93 646.50,554.43 647.50,552.95 648.50,551.50 649.50,550.08 650.50,548.68 651.50,547.33 652.50,546.01 653.50,544.73 654.50,543.49 655.50,542.30 656.50,541.16 657.50,540.07 658.50,539.03 659.50,538.06 660.50,537.14 661.50,536.28 662.50,535.48 663.50,534.75 664.50,534.09 665.50,533.49 666.50,532.97 667.50,532.51 668.50,532.13 669.50,531.81 670.50,531.58 671.50,531.41 672.50,531.32 673.50,531.30 674.50,531.36 675.50,531.49 676.50,531.70 677.50,531.98 678.50,532.33 679.50,532.75 680.50,533.25 681.50,533.81 682.50,534.45 683.50,535.15 684.50,535.91 685.50,536.74 686.50,537.64 687.50,538.59 688.50,539.60 689.50,540.66 690.50,541.78 691.50,542.95 692.50,544.16 693.50,545.42 694.50,546.73 695.50,548.07 696.50,549.45 697.50,550.86 698.50,552.30 699.50,553.76 700.50,555.25 701.50,556.76 702.50,558.29 703.50,559.83 704.50,561.37 705.50,562.93 706.50,564.48 707.50,566.03 708.50,567.58 709.50,569.12 710.50,570.65 711.50,572.16 712.50,573.65 713.50,575.12 714.50,576.56 715.50,577.98 716.50,579.36 717.50,580.71 718.50,582.02 719.50,583.28 720.50,584.50 721.50,585.68 722.50,586.80 723.50,587.87 724.50,588.89 725.50,589.85 726.50,590.75 727.50,591.59 728.50,592.36 729.50,593.07 730.50,593.71 731.50,594.28 732.50,594.79 733.50,595.22 734.50,595.58 735.50,595.87 736.50,596.09 737.50,596.23 738.50,596.29 739.50,596.29 740.50,596.20 741.50,596.05 742.50,595.82 743.50,595.52 744.50,595.14 745.50,594.69 746.50,594.18 747.50,593.59 748.50,592.93 749.50,592.21 750.50,591.42 751.50,590.57 752.50,589.66 753.50,588.69 754.50,587.66 755.50,586.58 756.50,585.45 757.50,584.26 758.50,583.03 759.50,581.76 760.50,580.44 761.50,579.09 762.50,577.70 763.50,576.28 764.50,574.83 765.50,573.35 766.50,571.86 767.50,570.34 768.50,568.81 769.50,567.27 770.50,565.72 771.50,564.17 772.50,562.61 773.50,561.06 774.50,559.52 775.50,557.98 776.50,556.46 777.50,554.95 778.50,553.47 779.50,552.01 780.50,550.57 781.50,549.17 782.50,547.80" fill="none" stroke="#78dc30" stroke-width="2" stroke-linejoin="miter" />
<line x1="213.30" y1="461.70" x2="213.30" y2="500.30" stroke="#4ac040" stroke-width="1.8" />
<line x1="213.30" y1="500.30" x2="213.30" y2="596.30" stroke="#958040" stroke-width="1.2" />
<path d="M204.5,452 L222.7,452 L213.6,460.5 Z" fill="#e020c0"/>
<path d="M204.5,452 L222.7,452 L221,454 L206,454 Z" fill="#60c8e8"/>
<circle cx="213.5" cy="596.3" r="2.5" fill="none" stroke="#c040c0" stroke-width="1.2"/></svg></body></html>
